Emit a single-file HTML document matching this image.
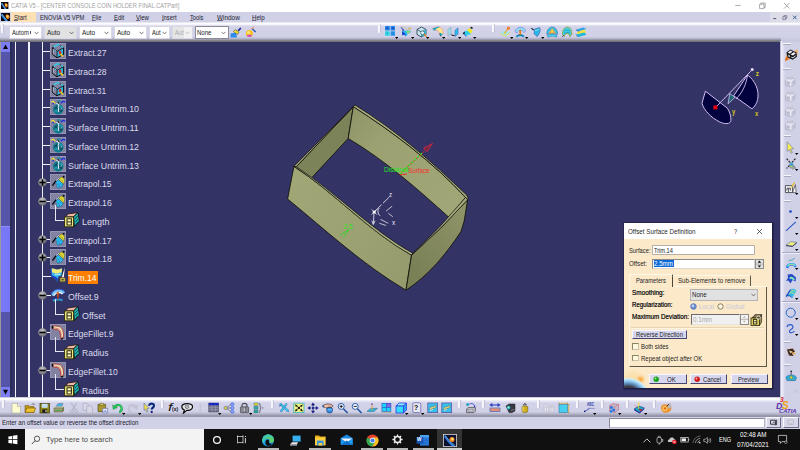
<!DOCTYPE html>
<html lang="en"><head><meta charset="utf-8"><title>CATIA V5 - [CENTER CONSOLE COIN HOLDER FINAL.CATPart]</title>
<style>
html,body{margin:0;padding:0;}
body{width:800px;height:450px;overflow:hidden;position:relative;background:#333366;font-family:"Liberation Sans",sans-serif;}
.r{position:absolute;display:block;box-sizing:border-box;}
.t{position:absolute;display:block;white-space:nowrap;transform-origin:0 0;}
u{text-decoration:underline;text-decoration-thickness:0.4px;text-underline-offset:0.3px;text-decoration-color:#6a6a80;}
</style></head><body>
<div class="r" style="left:0.00px;top:42.00px;width:800.00px;height:355.00px;background:#333366;"></div>
<div class="r" style="left:0.00px;top:0.00px;width:800.00px;height:12.00px;background:#ffffff;"></div>
<svg class="r" style="left:1.20px;top:2.20px;" width="7.4" height="7.2" viewBox="0 0 9 9" preserveAspectRatio="none"><rect width="9" height="9" fill="#06060e"/><path d="M.6 .6C2.6 3.4 4 6.4 6.8 9H4.4C2.8 6.8 1.6 4.6 0 2.6z" fill="#2f86ea"/><path d="M1 1.2C2.8 3.6 4.2 6.2 6 8.6" stroke="#9adcff" stroke-width=".7" fill="none"/><path d="M4.4 2.2C5.6 1.2 7.8 1.8 8.2 3.6C8.6 5.4 7.4 7 5.8 6.6C5 5.4 4.4 3.8 4.4 2.2z" fill="#f07818"/><circle cx="6.2" cy="3.8" r="1.3" fill="#ffd050"/></svg>
<span class="t" style="left:11.20px;top:2.48px;font-size:7.2px;line-height:7.2px;color:#a2a2a2;transform:scaleX(0.7961);">CATIA V5 - [CENTER CONSOLE COIN HOLDER FINAL.CATPart]</span>
<svg class="r" style="left:730.00px;top:0.00px;" width="70" height="12" viewBox="0 0 70 12" preserveAspectRatio="none"><path d="M5.3 5.5H10.6" stroke="#777" stroke-width=".6" fill="none"/><path d="M29.6 4.2H34v4.4H29.6zM30.8 4.2V3H35.2V7.4H34" stroke="#777" stroke-width=".6" fill="none"/><path d="M54 3L59.5 8.5M59.5 3L54 8.5" stroke="#777" stroke-width=".6" fill="none"/></svg>
<div class="r" style="left:0.00px;top:11.80px;width:800.00px;height:10.00px;background:#d0d0e6;"></div>
<svg class="r" style="left:0.60px;top:13.10px;" width="9.4" height="8.3" viewBox="0 0 9 9" preserveAspectRatio="none"><rect width="9" height="9" fill="#06060e"/><path d="M.6 .6C2.6 3.4 4 6.4 6.8 9H4.4C2.8 6.8 1.6 4.6 0 2.6z" fill="#2f86ea"/><path d="M1 1.2C2.8 3.6 4.2 6.2 6 8.6" stroke="#9adcff" stroke-width=".7" fill="none"/><path d="M4.4 2.2C5.6 1.2 7.8 1.8 8.2 3.6C8.6 5.4 7.4 7 5.8 6.6C5 5.4 4.4 3.8 4.4 2.2z" fill="#f07818"/><circle cx="6.2" cy="3.8" r="1.3" fill="#ffd050"/></svg>
<div class="r" style="left:11.00px;top:12.00px;width:25.00px;height:9.80px;background:#fde0b4;"></div>
<span class="t" style="left:14.20px;top:13.78px;font-size:7.2px;line-height:7.2px;color:#1c1c30;transform:scaleX(0.8286);"><u>S</u>tart</span>
<span class="t" style="left:39.80px;top:13.78px;font-size:7.2px;line-height:7.2px;color:#1c1c30;transform:scaleX(0.8058);">ENOVIA V5 VPM</span>
<span class="t" style="left:91.60px;top:13.78px;font-size:7.2px;line-height:7.2px;color:#1c1c30;transform:scaleX(0.8102);"><u>F</u>ile</span>
<span class="t" style="left:113.60px;top:13.78px;font-size:7.2px;line-height:7.2px;color:#1c1c30;transform:scaleX(0.8221);"><u>E</u>dit</span>
<span class="t" style="left:136.40px;top:13.78px;font-size:7.2px;line-height:7.2px;color:#1c1c30;transform:scaleX(0.8400);"><u>V</u>iew</span>
<span class="t" style="left:162.20px;top:13.78px;font-size:7.2px;line-height:7.2px;color:#1c1c30;transform:scaleX(0.8108);"><u>I</u>nsert</span>
<span class="t" style="left:190.00px;top:13.78px;font-size:7.2px;line-height:7.2px;color:#1c1c30;transform:scaleX(0.7972);"><u>T</u>ools</span>
<span class="t" style="left:216.60px;top:13.78px;font-size:7.2px;line-height:7.2px;color:#1c1c30;transform:scaleX(0.8903);"><u>W</u>indow</span>
<span class="t" style="left:252.20px;top:13.78px;font-size:7.2px;line-height:7.2px;color:#1c1c30;transform:scaleX(0.8509);"><u>H</u>elp</span>
<div class="r" style="left:770.00px;top:12.30px;width:30.00px;height:9.50px;background:#dcdde8;"></div>
<svg class="r" style="left:770.00px;top:12.00px;" width="30" height="10" viewBox="0 0 30 10" preserveAspectRatio="none"><path d="M3.2 6.6H6.2" stroke="#446" stroke-width=".9" fill="none"/><path d="M12.8 4.8H15.6V7.6H12.8zM13.9 4.8V3.6H16.8V6.4H15.6" stroke="#557" stroke-width=".6" fill="none"/><path d="M23 3.6L26.6 7.2M26.6 3.6L23 7.2" stroke="#2a5a8c" stroke-width=".9" fill="none"/></svg>
<div class="r" style="left:0.00px;top:21.60px;width:800.00px;height:20.60px;background:linear-gradient(to bottom,#d0d0e6 0%,#ffffff 5%,#fbfbfe 11%,#e0e0f0 17%,#d2d2e8 24%,#d0d0e6 74%,#b2b2c8 84%,#8a8a96 91%,#767676 96%,#6c6c78 99%,#50507a 100%);"></div>
<div class="r" style="left:1.20px;top:24.00px;width:1.70px;height:9.00px;background:#f6f6fd;box-shadow:0.6px 0 0 #b4b4cc;border-radius:.6px;"></div>
<div class="r" style="left:9.10px;top:26.10px;width:33.30px;height:12.80px;background:#fff;border:0.6px solid #d8d8e4;border-radius:.8px;"></div>
<span class="t" style="left:12.10px;top:28.78px;font-size:7.2px;line-height:7.2px;color:#222;transform:scaleX(0.8073);">Autom</span>
<div class="r" style="left:29.70px;top:31.40px;width:0.70px;height:3.00px;background:#555;"></div>
<svg class="r" style="left:34.20px;top:30.50px;" width="5" height="4" viewBox="0 0 5 4" preserveAspectRatio="none"><path d="M.5 .8L2.5 2.9L4.5 .8" stroke="#444" stroke-width=".7" fill="none"/></svg>
<div class="r" style="left:44.10px;top:26.10px;width:32.80px;height:12.80px;background:#e2e2e2;border:0.6px solid #d8d8e4;border-radius:.8px;"></div>
<span class="t" style="left:47.10px;top:28.78px;font-size:7.2px;line-height:7.2px;color:#222;transform:scaleX(0.8912);">Auto</span>
<svg class="r" style="left:68.70px;top:30.50px;" width="5" height="4" viewBox="0 0 5 4" preserveAspectRatio="none"><path d="M.5 .8L2.5 2.9L4.5 .8" stroke="#444" stroke-width=".7" fill="none"/></svg>
<div class="r" style="left:78.60px;top:26.10px;width:33.80px;height:12.80px;background:#fff;border:0.6px solid #d8d8e4;border-radius:.8px;"></div>
<span class="t" style="left:81.60px;top:28.78px;font-size:7.2px;line-height:7.2px;color:#222;transform:scaleX(0.8912);">Auto</span>
<svg class="r" style="left:104.20px;top:30.50px;" width="5" height="4" viewBox="0 0 5 4" preserveAspectRatio="none"><path d="M.5 .8L2.5 2.9L4.5 .8" stroke="#444" stroke-width=".7" fill="none"/></svg>
<div class="r" style="left:113.60px;top:26.10px;width:33.30px;height:12.80px;background:#fff;border:0.6px solid #d8d8e4;border-radius:.8px;"></div>
<span class="t" style="left:116.60px;top:28.78px;font-size:7.2px;line-height:7.2px;color:#222;transform:scaleX(0.8912);">Auto</span>
<svg class="r" style="left:138.70px;top:30.50px;" width="5" height="4" viewBox="0 0 5 4" preserveAspectRatio="none"><path d="M.5 .8L2.5 2.9L4.5 .8" stroke="#444" stroke-width=".7" fill="none"/></svg>
<div class="r" style="left:148.60px;top:26.10px;width:21.80px;height:12.80px;background:#fff;border:0.6px solid #d8d8e4;border-radius:.8px;"></div>
<span class="t" style="left:151.60px;top:28.78px;font-size:7.2px;line-height:7.2px;color:#222;transform:scaleX(0.7958);">Aut</span>
<svg class="r" style="left:162.20px;top:30.50px;" width="5" height="4" viewBox="0 0 5 4" preserveAspectRatio="none"><path d="M.5 .8L2.5 2.9L4.5 .8" stroke="#444" stroke-width=".7" fill="none"/></svg>
<div class="r" style="left:171.60px;top:26.10px;width:21.80px;height:12.80px;background:#f2f2f2;border:0.6px solid #d8d8e4;border-radius:.8px;"></div>
<div class="r" style="left:172.60px;top:27.00px;width:11.50px;height:11.00px;background:#e6e6e6;"></div>
<span class="t" style="left:174.60px;top:28.78px;font-size:7.2px;line-height:7.2px;color:#a8a8b0;transform:scaleX(0.7958);">Aut</span>
<svg class="r" style="left:185.20px;top:30.50px;" width="5" height="4" viewBox="0 0 5 4" preserveAspectRatio="none"><path d="M.5 .8L2.5 2.9L4.5 .8" stroke="#b0b0b8" stroke-width=".7" fill="none"/></svg>
<div class="r" style="left:194.60px;top:26.10px;width:34.30px;height:12.80px;background:#fff;border:0.6px solid #8a8a98;border-radius:.8px;"></div>
<span class="t" style="left:197.20px;top:28.78px;font-size:7.2px;line-height:7.2px;color:#222;transform:scaleX(0.8366);">None</span>
<svg class="r" style="left:220.70px;top:30.50px;" width="5" height="4" viewBox="0 0 5 4" preserveAspectRatio="none"><path d="M.5 .8L2.5 2.9L4.5 .8" stroke="#444" stroke-width=".7" fill="none"/></svg>
<svg class="r" style="left:229.50px;top:26.50px;" width="12" height="11" viewBox="0 0 12 11" preserveAspectRatio="none"><path d="M0.5 6.5L6 5.5L7 10.5H0.5z" fill="#2f8cf0"/><path d="M3.5 4.5L7.5 7.5L9 5L5.4 2.6z" fill="#f0e030" stroke="#333" stroke-width=".5"/><path d="M8.3 3.8L10.8 1" stroke="#1a1a90" stroke-width="1.6"/></svg>
<svg class="r" style="left:244.50px;top:26.00px;" width="12" height="12" viewBox="0 0 12 12" preserveAspectRatio="none"><circle cx="4.4" cy="7.4" r="3.5" fill="#f8c020"/><circle cx="3.6" cy="6.4" r="1.5" fill="#ffe680"/><path d="M1.5 9.5A3.5 3.5 0 0 0 7.4 9.3L4.4 8.6z" fill="#d050c8"/><path d="M7.2 2.6L10.6 6" stroke="#2050b0" stroke-width="1.3"/><path d="M6.2 3.2L9 .8" stroke="#f09060" stroke-width="1.1"/></svg>
<div class="r" style="left:378.20px;top:24.00px;width:1.70px;height:8.80px;background:#f6f6fd;box-shadow:0.6px 0 0 #b4b4cc;border-radius:.6px;"></div>
<svg class="r" style="left:384.60px;top:26.30px;" width="10.6" height="10" viewBox="0 0 10.6 10" preserveAspectRatio="none"><rect x="0" y="0" width="4.8" height="4.5" rx=".5" fill="#2484ea"/><rect x="5.6" y="0" width="4.8" height="4.5" rx=".5" fill="#2484ea"/><rect x="0" y="5.3" width="4.8" height="4.5" rx=".5" fill="#34d8e8"/><rect x="5.6" y="5.3" width="4.8" height="4.5" rx=".5" fill="#2c98ee"/><path d="M1.2 1.4H3.4V3H1.2zM6.8 1.4H9V3H6.8z" fill="#1848b8"/><path d="M1.6 6.6H3V8.6H1.6z" fill="#20a8c8"/><path d="M6.8 6.8H9V8.4H6.8z" fill="#1c60c8"/><path d="M7.4 7.2H8.4V8H7.4z" fill="#40e0f0"/></svg>
<svg class="r" style="left:395.00px;top:37.40px;" width="3.4" height="2" viewBox="0 0 3.4 2" preserveAspectRatio="none"><path d="M0 0H3.4L1.7 1.9z" fill="#000"/></svg>
<svg class="r" style="left:399.60px;top:26.00px;" width="12" height="11.5" viewBox="0 0 12 11.5" preserveAspectRatio="none"><path d="M2 5.2C4 4 5.6 5.4 7.6 4.2L11.2 5.4C10 7.4 8.4 7.2 7.4 8.6L6 10.6L4.2 8.6L2.4 9.6z" fill="#28b4f0"/><path d="M2 5.2L2.4 9.6L4.2 8.6L6 10.6L5 7.4z" fill="#1838d0"/><path d="M6.4 5C8 5.4 9.2 4.8 10.6 5.4L9 6.8C8 6.4 7 6.6 6 6.2z" fill="#78e060"/><path d="M7 7C8 6.8 8.8 7 9.4 6.6" stroke="#f0e050" stroke-width=".8" fill="none"/><path d="M1.4 .8L7.8 2.8L10.6 2.4L8 4L3.6 2.6z" fill="#fbf8ec" stroke="#8c8470" stroke-width=".35"/><circle cx="9.9" cy="2.6" r="1.3" fill="#c8b060"/><circle cx="10.1" cy="2.5" r=".55" fill="#f0e8c0"/><path d="M1 1.4L3.6 4.4" stroke="#2030b0" stroke-width=".9"/><path d="M2 4.6L3.9 4.8L3.4 3z" fill="#2030b0"/></svg>
<svg class="r" style="left:410.60px;top:37.40px;" width="3.4" height="2" viewBox="0 0 3.4 2" preserveAspectRatio="none"><path d="M0 0H3.4L1.7 1.9z" fill="#000"/></svg>
<svg class="r" style="left:415.60px;top:26.00px;" width="12.5" height="12" viewBox="0 0 12.5 12" preserveAspectRatio="none"><path d="M1 3.5L5.5 1L10 3.5V8.5L5.5 11L1 8.5z" fill="#c8e8f0" stroke="#203040" stroke-width=".8"/><path d="M1 3.5L5.5 6L10 3.5M5.5 6V11" stroke="#203040" stroke-width=".7" fill="none"/><path d="M5.5 6L10 3.5V8.5L5.5 11z" fill="#38c0d8"/><circle cx="6.6" cy="6.8" r="1.9" fill="#e8f8ff" stroke="#204060" stroke-width=".6"/><path d="M8 8.2L10.8 10.8" stroke="#f08020" stroke-width="1.2"/></svg>
<svg class="r" style="left:426.20px;top:37.40px;" width="3.4" height="2" viewBox="0 0 3.4 2" preserveAspectRatio="none"><path d="M0 0H3.4L1.7 1.9z" fill="#000"/></svg>
<svg class="r" style="left:431.50px;top:26.00px;" width="12.5" height="12" viewBox="0 0 12.5 12" preserveAspectRatio="none"><path d="M.6 2.4L6.4 .6C9.6 1.8 11.6 4.6 11.2 7.2L8.8 10.4L7.4 7.6C7.4 5.8 6.4 4.6 4.6 4.2L1.6 4.2z" fill="#fce88c" stroke="#f08888" stroke-width=".6"/><path d="M.6 2.4L6.4 .6L7.6 1.2L4.4 2.6L3.4 4.2H1.6z" fill="#18a8c4"/><path d="M11.2 7.2L8.8 10.4L7.4 7.6L8.6 6.8L9.8 8z" fill="#18a8c4"/><path d="M7.4 7.6L8.8 10.4" stroke="#104060" stroke-width=".6"/></svg>
<svg class="r" style="left:442.00px;top:37.40px;" width="3.4" height="2" viewBox="0 0 3.4 2" preserveAspectRatio="none"><path d="M0 0H3.4L1.7 1.9z" fill="#000"/></svg>
<svg class="r" style="left:446.60px;top:26.00px;" width="12.5" height="12" viewBox="0 0 12.5 12" preserveAspectRatio="none"><path d="M1 3.2L4 1.2V8L1 10.2z" fill="#a4e0ee" stroke="#7890a0" stroke-width=".45"/><path d="M8 4.4L11 1.8V8L8 10.6z" fill="#2cc0f0" stroke="#2858a8" stroke-width=".5"/><path d="M4.6 8.4C5 9.8 6.4 9.8 7.4 9.2" stroke="#202030" stroke-width="1.1" fill="none"/></svg>
<svg class="r" style="left:457.60px;top:37.40px;" width="3.4" height="2" viewBox="0 0 3.4 2" preserveAspectRatio="none"><path d="M0 0H3.4L1.7 1.9z" fill="#000"/></svg>
<svg class="r" style="left:462.40px;top:26.00px;" width="12.5" height="12" viewBox="0 0 12.5 12" preserveAspectRatio="none"><path d="M1.4 7C3 4.6 5 4.2 7 4.8L9 8.6C7 8.2 5.4 8.8 4.2 10.6z" fill="#30d0ec"/><path d="M5 4.4L8 2L10.6 5.4L8.2 7.6C7.6 6.2 6.6 5.2 5 4.4z" fill="#f0e820"/><path d="M8 2L9.2 .8L10.8 1.6L10.2 3z" fill="#14141c"/><path d="M.6 7.6L2.4 5.6L3 6.6L1.8 8.6z" fill="#14141c"/><path d="M1.4 7L4.2 10.6" stroke="#1838a8" stroke-width=".7"/></svg>
<svg class="r" style="left:473.40px;top:37.40px;" width="3.4" height="2" viewBox="0 0 3.4 2" preserveAspectRatio="none"><path d="M0 0H3.4L1.7 1.9z" fill="#000"/></svg>
<div class="r" style="left:492.40px;top:24.00px;width:1.90px;height:8.40px;background:#f6f6fd;box-shadow:0.6px 0 0 #b4b4cc;border-radius:.6px;"></div>
<svg class="r" style="left:498.60px;top:26.00px;" width="12.5" height="12" viewBox="0 0 12.5 12" preserveAspectRatio="none"><path d="M1 7.6L5.4 4.4L11 6.4L6.6 10.2z" fill="#9ce8f0"/><path d="M1 7.6L6.6 10.2L11 6.4" stroke="#e8d850" stroke-width=".9" fill="none"/><path d="M4.6 6.8L6.4 6L7.2 7.4L5.4 8.2z" fill="#f0d030"/><path d="M6 6.8L9 2.6" stroke="#f0a030" stroke-width="1.1"/><rect x="8" y=".8" width="2.8" height="2.8" fill="#f06c28"/><rect x="8.9" y="1.6" width="1" height="1" fill="#f8d040"/></svg>
<svg class="r" style="left:509.60px;top:37.40px;" width="3.4" height="2" viewBox="0 0 3.4 2" preserveAspectRatio="none"><path d="M0 0H3.4L1.7 1.9z" fill="#000"/></svg>
<svg class="r" style="left:514.40px;top:26.00px;" width="12.5" height="12" viewBox="0 0 12.5 12" preserveAspectRatio="none"><path d="M1 5.6C2.4 .4 9.6 -.2 11.6 4.6L9.8 6.6C8.4 3.4 4.6 3.6 3 7z" fill="#8ce0f0" stroke="#8078f0" stroke-width=".7"/><path d="M1.6 10.4C3.4 7.6 8.8 7.6 10.6 10.2L9 11.4C7.8 9.8 4.6 9.8 3.2 11.6z" fill="#18a0c0"/><path d="M3 10C4.6 8.6 7.6 8.6 9.2 9.8" stroke="#2840c8" stroke-width=".7" fill="none"/><path d="M6.2 3.8V9" stroke="#f07c18" stroke-width="1.7"/><path d="M5.4 8.6H7V9.8H5.4z" fill="#30a050"/></svg>
<svg class="r" style="left:525.20px;top:37.40px;" width="3.4" height="2" viewBox="0 0 3.4 2" preserveAspectRatio="none"><path d="M0 0H3.4L1.7 1.9z" fill="#000"/></svg>
<svg class="r" style="left:530.20px;top:26.00px;" width="12.5" height="12" viewBox="0 0 12.5 12" preserveAspectRatio="none"><path d="M3.4 3.6L9.6 1.6C10.8 4 10 7 7.2 10.6L3.8 7.6C5 6 4.6 5 3.4 3.6z" fill="#28b8e8" stroke="#2040a0" stroke-width=".5"/><path d="M1.4 2.2L3.6 4.2" stroke="#202040" stroke-width="1.1"/><path d="M5 4.6C6.6 4.4 8 3.8 9.4 3" stroke="#a0f0f0" stroke-width=".8" fill="none"/></svg>
<svg class="r" style="left:541.00px;top:37.40px;" width="3.4" height="2" viewBox="0 0 3.4 2" preserveAspectRatio="none"><path d="M0 0H3.4L1.7 1.9z" fill="#000"/></svg>
<svg class="r" style="left:545.80px;top:26.00px;" width="12.5" height="12" viewBox="0 0 12.5 12" preserveAspectRatio="none"><path d="M.8 8.4C.8 4 3.2 1 6.2 1C9.2 1 11.6 4 11.6 8.4L10.2 8C8 7 4.4 7 2.2 8z" fill="#3cc4e4" stroke="#2c6cb0" stroke-width=".6"/><path d="M3 7.4L6.2 2.6L9.4 7.4C7.6 6.6 4.8 6.6 3 7.4z" fill="#f8d848" stroke="#f08830" stroke-width=".7"/><path d="M1.4 9.4C3.6 8 8.8 8 11 9.4L10.4 11.2C8.4 10 4 10 2 11.2z" fill="#38dcec" stroke="#2c6cb0" stroke-width=".5"/></svg>
<svg class="r" style="left:561.20px;top:26.00px;" width="12.5" height="12" viewBox="0 0 12.5 12" preserveAspectRatio="none"><path d="M1.6 8.8C1 3.6 3.8 1.2 6.4 1.2C9.2 1.2 11 4 10.6 8.6L8.8 10.6C8.8 8.4 7.6 7.4 6 7.4C4.4 7.4 3.6 8.6 3.4 10.4z" fill="#40d4e8" stroke="#8c9828" stroke-width=".8"/><path d="M3.2 5.4C4.6 3.6 7.6 3.6 9 5.4" stroke="#1c98c0" stroke-width=".9" fill="none"/><path d="M3 7.6C4.4 5.8 7.8 5.8 9.2 7.6" stroke="#1c98c0" stroke-width=".8" fill="none"/><path d="M1 11.2L3 9" stroke="#303040" stroke-width=".7"/></svg>
<svg class="r" style="left:575.00px;top:26.00px;" width="12.5" height="12" viewBox="0 0 12.5 12" preserveAspectRatio="none"><path d="M1 3.8L8.6 1.4L11.4 3L3.6 5.6z" fill="#28a0e8"/><path d="M1.6 6L9.6 3.6L11 6.4L3 8.8z" fill="#f0e040"/><path d="M1 8.6L9.4 6.6L11.4 8.8L3.4 11z" fill="#20b8d8"/><path d="M1 3.8L3.6 5.6M1 8.6L3.4 11" stroke="#1840a0" stroke-width=".6"/></svg>
<div class="r" style="left:0.00px;top:42.00px;width:1.20px;height:355.00px;background:#9a9a9a;"></div>
<div class="r" style="left:1.20px;top:42.00px;width:9.00px;height:355.00px;background:#5555aa;"></div>
<div class="r" style="left:1.20px;top:42.00px;width:9.00px;height:9.50px;background:#7c7cf4;"></div>
<svg class="r" style="left:1.20px;top:42.00px;" width="9" height="9.5" viewBox="0 0 9 9.5" preserveAspectRatio="none"><path d="M2 7L4.5 2.4L7 7z" fill="#000"/></svg>
<div class="r" style="left:1.20px;top:226.00px;width:9.00px;height:85.50px;background:#7878f6;border-top:0.8px solid #8c8cff;"></div>
<div class="r" style="left:1.20px;top:387.00px;width:9.00px;height:9.60px;background:#7c7cf4;"></div>
<svg class="r" style="left:1.20px;top:387.00px;" width="9" height="9.6" viewBox="0 0 9 9.6" preserveAspectRatio="none"><path d="M2 2.8L4.5 7.4L7 2.8z" fill="#000"/></svg>
<div class="r" style="left:10.20px;top:42.00px;width:1.60px;height:355.00px;background:#2c2c5c;"></div>
<svg width="0" height="0" style="position:absolute"><defs><pattern id="dth" width="2" height="2" patternUnits="userSpaceOnUse"><rect width="1" height="1" fill="#8a8aa8"/><rect x="1" y="1" width="1" height="1" fill="#8a8aa8"/></pattern><radialGradient id="ndg" cx=".45" cy=".3" r=".75"><stop offset="0" stop-color="#c4c4c8"/><stop offset=".55" stop-color="#909096"/><stop offset="1" stop-color="#5c5c68"/></radialGradient></defs></svg>
<div class="r" style="left:14.90px;top:42.00px;width:1.25px;height:355.00px;background:#f2f2fa;"></div>
<div class="r" style="left:28.40px;top:42.00px;width:1.25px;height:355.00px;background:#f2f2fa;"></div>
<div class="r" style="left:41.60px;top:42.00px;width:1.25px;height:355.00px;background:#f2f2fa;"></div>
<div class="r" style="left:42.00px;top:50.95px;width:8.60px;height:1.20px;background:#f2f2fa;"></div>
<svg class="r" style="left:50.40px;top:43.15px;" width="16" height="16" viewBox="0 0 16 16" preserveAspectRatio="none"><rect width="16" height="16" fill="#7a7a9a"/><rect width="16" height="16" fill="url(#dth)"/><rect x=".5" y=".5" width="15" height="15" fill="none" stroke="#a6a6c0" stroke-width="1" stroke-dasharray="1 1"/><path d="M7.2 8.2L13.6 4.8V11.4L6.9 14.8z" fill="#2cb8dc"/><path d="M2.4 4.8L7.8 1.6L13.6 4.8V11.4L6.9 14.8L2.4 11.4z" fill="none" stroke="#0a0a14" stroke-width="1"/><path d="M2.4 4.8L7.2 8.2L13.6 4.8M7.2 8.2L6.9 14.8" fill="none" stroke="#0a0a14" stroke-width=".8"/><path d="M3.6 4L7.8 1.6L9.6 2.6" stroke="#44cce8" stroke-width="1.5" fill="none"/><path d="M10.8 3.2L13.2 4.6" stroke="#44cce8" stroke-width="1.3" fill="none"/><path d="M3.2 6V10.8" stroke="#d0d0e0" stroke-width=".7"/><path d="M4.4 6.8L6.2 8" stroke="#44cce8" stroke-width="1"/><path d="M8.8 8.2L11 7.8L11.4 10.8L9.2 11.2z" fill="#e02020"/><path d="M10.6 10.8L13 13.6" stroke="#ecd420" stroke-width="1.6"/><path d="M9.6 11.2L10.8 12.6" stroke="#f09820" stroke-width=".8"/></svg>
<span class="t" style="left:68.00px;top:48.11px;font-size:9.4px;line-height:9.4px;color:#dcdcec;transform:scaleX(0.9121);">Extract.27</span>
<div class="r" style="left:42.00px;top:69.95px;width:8.60px;height:1.20px;background:#f2f2fa;"></div>
<svg class="r" style="left:50.40px;top:61.90px;" width="16" height="16" viewBox="0 0 16 16" preserveAspectRatio="none"><rect width="16" height="16" fill="#7a7a9a"/><rect width="16" height="16" fill="url(#dth)"/><rect x=".5" y=".5" width="15" height="15" fill="none" stroke="#a6a6c0" stroke-width="1" stroke-dasharray="1 1"/><path d="M7.2 8.2L13.6 4.8V11.4L6.9 14.8z" fill="#2cb8dc"/><path d="M2.4 4.8L7.8 1.6L13.6 4.8V11.4L6.9 14.8L2.4 11.4z" fill="none" stroke="#0a0a14" stroke-width="1"/><path d="M2.4 4.8L7.2 8.2L13.6 4.8M7.2 8.2L6.9 14.8" fill="none" stroke="#0a0a14" stroke-width=".8"/><path d="M3.6 4L7.8 1.6L9.6 2.6" stroke="#44cce8" stroke-width="1.5" fill="none"/><path d="M10.8 3.2L13.2 4.6" stroke="#44cce8" stroke-width="1.3" fill="none"/><path d="M3.2 6V10.8" stroke="#d0d0e0" stroke-width=".7"/><path d="M4.4 6.8L6.2 8" stroke="#44cce8" stroke-width="1"/><path d="M8.8 8.2L11 7.8L11.4 10.8L9.2 11.2z" fill="#e02020"/><path d="M10.6 10.8L13 13.6" stroke="#ecd420" stroke-width="1.6"/><path d="M9.6 11.2L10.8 12.6" stroke="#f09820" stroke-width=".8"/></svg>
<span class="t" style="left:68.00px;top:66.86px;font-size:9.4px;line-height:9.4px;color:#dcdcec;transform:scaleX(0.9121);">Extract.28</span>
<div class="r" style="left:42.00px;top:88.95px;width:8.60px;height:1.20px;background:#f2f2fa;"></div>
<svg class="r" style="left:50.40px;top:80.65px;" width="16" height="16" viewBox="0 0 16 16" preserveAspectRatio="none"><rect width="16" height="16" fill="#7a7a9a"/><rect width="16" height="16" fill="url(#dth)"/><rect x=".5" y=".5" width="15" height="15" fill="none" stroke="#a6a6c0" stroke-width="1" stroke-dasharray="1 1"/><path d="M7.2 8.2L13.6 4.8V11.4L6.9 14.8z" fill="#2cb8dc"/><path d="M2.4 4.8L7.8 1.6L13.6 4.8V11.4L6.9 14.8L2.4 11.4z" fill="none" stroke="#0a0a14" stroke-width="1"/><path d="M2.4 4.8L7.2 8.2L13.6 4.8M7.2 8.2L6.9 14.8" fill="none" stroke="#0a0a14" stroke-width=".8"/><path d="M3.6 4L7.8 1.6L9.6 2.6" stroke="#44cce8" stroke-width="1.5" fill="none"/><path d="M10.8 3.2L13.2 4.6" stroke="#44cce8" stroke-width="1.3" fill="none"/><path d="M3.2 6V10.8" stroke="#d0d0e0" stroke-width=".7"/><path d="M4.4 6.8L6.2 8" stroke="#44cce8" stroke-width="1"/><path d="M8.8 8.2L11 7.8L11.4 10.8L9.2 11.2z" fill="#e02020"/><path d="M10.6 10.8L13 13.6" stroke="#ecd420" stroke-width="1.6"/><path d="M9.6 11.2L10.8 12.6" stroke="#f09820" stroke-width=".8"/></svg>
<span class="t" style="left:68.00px;top:85.61px;font-size:9.4px;line-height:9.4px;color:#dcdcec;transform:scaleX(0.9027);">Extract.31</span>
<div class="r" style="left:42.00px;top:106.95px;width:8.60px;height:1.20px;background:#f2f2fa;"></div>
<svg class="r" style="left:50.40px;top:99.40px;" width="16" height="16" viewBox="0 0 16 16" preserveAspectRatio="none"><rect width="16" height="16" fill="#7a7a9a"/><rect width="16" height="16" fill="url(#dth)"/><rect x=".5" y=".5" width="15" height="15" fill="none" stroke="#a6a6c0" stroke-width="1" stroke-dasharray="1 1"/><circle cx="8.2" cy="10.2" r="5.3" fill="#147c90"/><path d="M4.4 9C5.6 7.4 7 7 8 7.2L8.2 10.4C7 9.6 5.6 9.6 4.4 10.4z" fill="#0c4c60"/><path d="M9 10.6C10.4 10 11.6 10.2 12.6 11L11.6 13.4C10.6 12.6 9.8 12.6 8.8 13z" fill="#0c4c60"/><path d="M4.6 12.6C5.6 11.6 6.8 11.6 7.6 12.2" stroke="#38b4c8" stroke-width=".9" fill="none"/><path d="M9.6 8C10.8 7.6 12 8 12.8 9" stroke="#38b4c8" stroke-width=".9" fill="none"/><path d="M1.2 3.2L3 2.2L5.4 4.4" stroke="#f0e030" stroke-width="1.2" fill="none"/><path d="M2.6 4.4L4 5" stroke="#2028e0" stroke-width="1.2" fill="none"/><path d="M10.8 4.2L13 2.4L15.4 3.2" stroke="#2430e0" stroke-width="1.4" fill="none"/><path d="M7 2.4L9.4 1.6L10.6 3" stroke="#18889c" stroke-width="1.2" fill="none"/><path d="M8 2.8L9 5.4" stroke="#101828" stroke-width="1"/><path d="M6.4 4.4L9 5.6L8.2 8.4L8.8 13" stroke="#f4f4ff" stroke-width="1" fill="none"/><path d="M10.6 10.6L12 9.4" stroke="#f0d8e0" stroke-width=".7"/></svg>
<span class="t" style="left:68.00px;top:104.36px;font-size:9.4px;line-height:9.4px;color:#dcdcec;transform:scaleX(0.9399);">Surface Untrim.10</span>
<div class="r" style="left:42.00px;top:125.95px;width:8.60px;height:1.20px;background:#f2f2fa;"></div>
<svg class="r" style="left:50.40px;top:118.15px;" width="16" height="16" viewBox="0 0 16 16" preserveAspectRatio="none"><rect width="16" height="16" fill="#7a7a9a"/><rect width="16" height="16" fill="url(#dth)"/><rect x=".5" y=".5" width="15" height="15" fill="none" stroke="#a6a6c0" stroke-width="1" stroke-dasharray="1 1"/><circle cx="8.2" cy="10.2" r="5.3" fill="#147c90"/><path d="M4.4 9C5.6 7.4 7 7 8 7.2L8.2 10.4C7 9.6 5.6 9.6 4.4 10.4z" fill="#0c4c60"/><path d="M9 10.6C10.4 10 11.6 10.2 12.6 11L11.6 13.4C10.6 12.6 9.8 12.6 8.8 13z" fill="#0c4c60"/><path d="M4.6 12.6C5.6 11.6 6.8 11.6 7.6 12.2" stroke="#38b4c8" stroke-width=".9" fill="none"/><path d="M9.6 8C10.8 7.6 12 8 12.8 9" stroke="#38b4c8" stroke-width=".9" fill="none"/><path d="M1.2 3.2L3 2.2L5.4 4.4" stroke="#f0e030" stroke-width="1.2" fill="none"/><path d="M2.6 4.4L4 5" stroke="#2028e0" stroke-width="1.2" fill="none"/><path d="M10.8 4.2L13 2.4L15.4 3.2" stroke="#2430e0" stroke-width="1.4" fill="none"/><path d="M7 2.4L9.4 1.6L10.6 3" stroke="#18889c" stroke-width="1.2" fill="none"/><path d="M8 2.8L9 5.4" stroke="#101828" stroke-width="1"/><path d="M6.4 4.4L9 5.6L8.2 8.4L8.8 13" stroke="#f4f4ff" stroke-width="1" fill="none"/><path d="M10.6 10.6L12 9.4" stroke="#f0d8e0" stroke-width=".7"/></svg>
<span class="t" style="left:68.00px;top:123.11px;font-size:9.4px;line-height:9.4px;color:#dcdcec;transform:scaleX(0.9433);">Surface Untrim.11</span>
<div class="r" style="left:42.00px;top:144.95px;width:8.60px;height:1.20px;background:#f2f2fa;"></div>
<svg class="r" style="left:50.40px;top:136.90px;" width="16" height="16" viewBox="0 0 16 16" preserveAspectRatio="none"><rect width="16" height="16" fill="#7a7a9a"/><rect width="16" height="16" fill="url(#dth)"/><rect x=".5" y=".5" width="15" height="15" fill="none" stroke="#a6a6c0" stroke-width="1" stroke-dasharray="1 1"/><circle cx="8.2" cy="10.2" r="5.3" fill="#147c90"/><path d="M4.4 9C5.6 7.4 7 7 8 7.2L8.2 10.4C7 9.6 5.6 9.6 4.4 10.4z" fill="#0c4c60"/><path d="M9 10.6C10.4 10 11.6 10.2 12.6 11L11.6 13.4C10.6 12.6 9.8 12.6 8.8 13z" fill="#0c4c60"/><path d="M4.6 12.6C5.6 11.6 6.8 11.6 7.6 12.2" stroke="#38b4c8" stroke-width=".9" fill="none"/><path d="M9.6 8C10.8 7.6 12 8 12.8 9" stroke="#38b4c8" stroke-width=".9" fill="none"/><path d="M1.2 3.2L3 2.2L5.4 4.4" stroke="#f0e030" stroke-width="1.2" fill="none"/><path d="M2.6 4.4L4 5" stroke="#2028e0" stroke-width="1.2" fill="none"/><path d="M10.8 4.2L13 2.4L15.4 3.2" stroke="#2430e0" stroke-width="1.4" fill="none"/><path d="M7 2.4L9.4 1.6L10.6 3" stroke="#18889c" stroke-width="1.2" fill="none"/><path d="M8 2.8L9 5.4" stroke="#101828" stroke-width="1"/><path d="M6.4 4.4L9 5.6L8.2 8.4L8.8 13" stroke="#f4f4ff" stroke-width="1" fill="none"/><path d="M10.6 10.6L12 9.4" stroke="#f0d8e0" stroke-width=".7"/></svg>
<span class="t" style="left:68.00px;top:141.86px;font-size:9.4px;line-height:9.4px;color:#dcdcec;transform:scaleX(0.9399);">Surface Untrim.12</span>
<div class="r" style="left:42.00px;top:163.95px;width:8.60px;height:1.20px;background:#f2f2fa;"></div>
<svg class="r" style="left:50.40px;top:155.65px;" width="16" height="16" viewBox="0 0 16 16" preserveAspectRatio="none"><rect width="16" height="16" fill="#7a7a9a"/><rect width="16" height="16" fill="url(#dth)"/><rect x=".5" y=".5" width="15" height="15" fill="none" stroke="#a6a6c0" stroke-width="1" stroke-dasharray="1 1"/><circle cx="8.2" cy="10.2" r="5.3" fill="#147c90"/><path d="M4.4 9C5.6 7.4 7 7 8 7.2L8.2 10.4C7 9.6 5.6 9.6 4.4 10.4z" fill="#0c4c60"/><path d="M9 10.6C10.4 10 11.6 10.2 12.6 11L11.6 13.4C10.6 12.6 9.8 12.6 8.8 13z" fill="#0c4c60"/><path d="M4.6 12.6C5.6 11.6 6.8 11.6 7.6 12.2" stroke="#38b4c8" stroke-width=".9" fill="none"/><path d="M9.6 8C10.8 7.6 12 8 12.8 9" stroke="#38b4c8" stroke-width=".9" fill="none"/><path d="M1.2 3.2L3 2.2L5.4 4.4" stroke="#f0e030" stroke-width="1.2" fill="none"/><path d="M2.6 4.4L4 5" stroke="#2028e0" stroke-width="1.2" fill="none"/><path d="M10.8 4.2L13 2.4L15.4 3.2" stroke="#2430e0" stroke-width="1.4" fill="none"/><path d="M7 2.4L9.4 1.6L10.6 3" stroke="#18889c" stroke-width="1.2" fill="none"/><path d="M8 2.8L9 5.4" stroke="#101828" stroke-width="1"/><path d="M6.4 4.4L9 5.6L8.2 8.4L8.8 13" stroke="#f4f4ff" stroke-width="1" fill="none"/><path d="M10.6 10.6L12 9.4" stroke="#f0d8e0" stroke-width=".7"/></svg>
<span class="t" style="left:68.00px;top:160.61px;font-size:9.4px;line-height:9.4px;color:#dcdcec;transform:scaleX(0.9399);">Surface Untrim.13</span>
<div class="r" style="left:42.00px;top:181.95px;width:8.60px;height:1.20px;background:#f2f2fa;"></div>
<svg class="r" style="left:50.40px;top:174.40px;" width="16" height="16" viewBox="0 0 16 16" preserveAspectRatio="none"><rect width="16" height="16" fill="#7a7a9a"/><rect width="16" height="16" fill="url(#dth)"/><rect x=".5" y=".5" width="15" height="15" fill="none" stroke="#a6a6c0" stroke-width="1" stroke-dasharray="1 1"/><path d="M2.4 11.6L6.2 6.6" stroke="#08080c" stroke-width="1.5"/><path d="M6.2 6.6L9 4.4" stroke="#c8cce0" stroke-width=".8"/><path d="M5.4 8.8L8.6 5.6L13.4 10L11 14L9.6 12.4L8.4 14.8L6.6 12.4L7 10.6z" fill="#2cb8ec" stroke="#144070" stroke-width=".4"/><path d="M8 9.4L9.6 12.4M9.6 8.4L11.2 10.6" stroke="#1880c0" stroke-width=".6"/><path d="M8.6 5.6L10.6 3.2C12.6 2.6 14.8 4.6 14.6 7L13.4 10z" fill="#dcd838" stroke="#4c4c18" stroke-width=".4"/><path d="M10.6 5.4L13 7.4" stroke="#8c8c20" stroke-width=".6"/><circle cx="13.6" cy="2.8" r="1" fill="#0c0c14"/></svg>
<svg class="r" style="left:38.00px;top:178.40px;" width="9" height="9" viewBox="0 0 9 9" preserveAspectRatio="none"><circle cx="4.5" cy="4.5" r="4.3" fill="url(#ndg)"/><path d="M1.4 4.5H7.6" stroke="#000" stroke-width="1.6"/><path d="M4.5 1.4V7.6" stroke="#000" stroke-width="1.6"/></svg>
<span class="t" style="left:68.00px;top:179.36px;font-size:9.4px;line-height:9.4px;color:#dcdcec;transform:scaleX(0.9169);">Extrapol.15</span>
<div class="r" style="left:42.00px;top:200.95px;width:8.60px;height:1.20px;background:#f2f2fa;"></div>
<svg class="r" style="left:50.40px;top:193.15px;" width="16" height="16" viewBox="0 0 16 16" preserveAspectRatio="none"><rect width="16" height="16" fill="#7a7a9a"/><rect width="16" height="16" fill="url(#dth)"/><rect x=".5" y=".5" width="15" height="15" fill="none" stroke="#a6a6c0" stroke-width="1" stroke-dasharray="1 1"/><path d="M2.4 11.6L6.2 6.6" stroke="#08080c" stroke-width="1.5"/><path d="M6.2 6.6L9 4.4" stroke="#c8cce0" stroke-width=".8"/><path d="M5.4 8.8L8.6 5.6L13.4 10L11 14L9.6 12.4L8.4 14.8L6.6 12.4L7 10.6z" fill="#2cb8ec" stroke="#144070" stroke-width=".4"/><path d="M8 9.4L9.6 12.4M9.6 8.4L11.2 10.6" stroke="#1880c0" stroke-width=".6"/><path d="M8.6 5.6L10.6 3.2C12.6 2.6 14.8 4.6 14.6 7L13.4 10z" fill="#dcd838" stroke="#4c4c18" stroke-width=".4"/><path d="M10.6 5.4L13 7.4" stroke="#8c8c20" stroke-width=".6"/><circle cx="13.6" cy="2.8" r="1" fill="#0c0c14"/></svg>
<svg class="r" style="left:38.00px;top:197.15px;" width="9" height="9" viewBox="0 0 9 9" preserveAspectRatio="none"><circle cx="4.5" cy="4.5" r="4.3" fill="url(#ndg)"/><path d="M1.4 4.5H7.6" stroke="#000" stroke-width="1.6"/></svg>
<span class="t" style="left:68.00px;top:198.11px;font-size:9.4px;line-height:9.4px;color:#dcdcec;transform:scaleX(0.9211);">Extrapol.16</span>
<div class="r" style="left:55.35px;top:205.40px;width:1.05px;height:15.80px;background:#e6e6f4;"></div>
<div class="r" style="left:55.35px;top:220.15px;width:9.20px;height:1.05px;background:#e6e6f4;"></div>
<svg class="r" style="left:64.00px;top:212.30px;" width="16" height="16" viewBox="0 0 16 16" preserveAspectRatio="none"><path d="M1 5L4.6 1.8L14 .6L9.6 4.8z" fill="#f0b8a0" stroke="#141414" stroke-width=".8"/><path d="M9.6 4.8L14 .6L15.4 9.4L10.4 14.6z" fill="#20b4b4" stroke="#141414" stroke-width=".9"/><path d="M11 7L13.6 4M11.4 10L14 7M11.6 12.6L14.6 9.6" stroke="#0a3c3c" stroke-width=".9"/><rect x=".6" y="5" width="9" height="9.8" fill="#f4ec80" stroke="#2c280c" stroke-width=".9"/><rect x="3" y="6.8" width="4.4" height="6.2" fill="#fcf8b8" stroke="#28240c" stroke-width="1"/><path d="M3 9.9H7.4" stroke="#28240c" stroke-width="1"/></svg>
<span class="t" style="left:81.50px;top:216.86px;font-size:9.4px;line-height:9.4px;color:#dcdcec;transform:scaleX(0.9599);">Length</span>
<div class="r" style="left:42.00px;top:238.95px;width:8.60px;height:1.20px;background:#f2f2fa;"></div>
<svg class="r" style="left:50.40px;top:230.65px;" width="16" height="16" viewBox="0 0 16 16" preserveAspectRatio="none"><rect width="16" height="16" fill="#7a7a9a"/><rect width="16" height="16" fill="url(#dth)"/><rect x=".5" y=".5" width="15" height="15" fill="none" stroke="#a6a6c0" stroke-width="1" stroke-dasharray="1 1"/><path d="M2.4 11.6L6.2 6.6" stroke="#08080c" stroke-width="1.5"/><path d="M6.2 6.6L9 4.4" stroke="#c8cce0" stroke-width=".8"/><path d="M5.4 8.8L8.6 5.6L13.4 10L11 14L9.6 12.4L8.4 14.8L6.6 12.4L7 10.6z" fill="#2cb8ec" stroke="#144070" stroke-width=".4"/><path d="M8 9.4L9.6 12.4M9.6 8.4L11.2 10.6" stroke="#1880c0" stroke-width=".6"/><path d="M8.6 5.6L10.6 3.2C12.6 2.6 14.8 4.6 14.6 7L13.4 10z" fill="#dcd838" stroke="#4c4c18" stroke-width=".4"/><path d="M10.6 5.4L13 7.4" stroke="#8c8c20" stroke-width=".6"/><circle cx="13.6" cy="2.8" r="1" fill="#0c0c14"/></svg>
<svg class="r" style="left:38.00px;top:234.65px;" width="9" height="9" viewBox="0 0 9 9" preserveAspectRatio="none"><circle cx="4.5" cy="4.5" r="4.3" fill="url(#ndg)"/><path d="M1.4 4.5H7.6" stroke="#000" stroke-width="1.6"/><path d="M4.5 1.4V7.6" stroke="#000" stroke-width="1.6"/></svg>
<span class="t" style="left:68.00px;top:235.61px;font-size:9.4px;line-height:9.4px;color:#dcdcec;transform:scaleX(0.9169);">Extrapol.17</span>
<div class="r" style="left:42.00px;top:256.95px;width:8.60px;height:1.20px;background:#f2f2fa;"></div>
<svg class="r" style="left:50.40px;top:249.40px;" width="16" height="16" viewBox="0 0 16 16" preserveAspectRatio="none"><rect width="16" height="16" fill="#7a7a9a"/><rect width="16" height="16" fill="url(#dth)"/><rect x=".5" y=".5" width="15" height="15" fill="none" stroke="#a6a6c0" stroke-width="1" stroke-dasharray="1 1"/><path d="M2.4 11.6L6.2 6.6" stroke="#08080c" stroke-width="1.5"/><path d="M6.2 6.6L9 4.4" stroke="#c8cce0" stroke-width=".8"/><path d="M5.4 8.8L8.6 5.6L13.4 10L11 14L9.6 12.4L8.4 14.8L6.6 12.4L7 10.6z" fill="#2cb8ec" stroke="#144070" stroke-width=".4"/><path d="M8 9.4L9.6 12.4M9.6 8.4L11.2 10.6" stroke="#1880c0" stroke-width=".6"/><path d="M8.6 5.6L10.6 3.2C12.6 2.6 14.8 4.6 14.6 7L13.4 10z" fill="#dcd838" stroke="#4c4c18" stroke-width=".4"/><path d="M10.6 5.4L13 7.4" stroke="#8c8c20" stroke-width=".6"/><circle cx="13.6" cy="2.8" r="1" fill="#0c0c14"/></svg>
<svg class="r" style="left:38.00px;top:253.40px;" width="9" height="9" viewBox="0 0 9 9" preserveAspectRatio="none"><circle cx="4.5" cy="4.5" r="4.3" fill="url(#ndg)"/><path d="M1.4 4.5H7.6" stroke="#000" stroke-width="1.6"/><path d="M4.5 1.4V7.6" stroke="#000" stroke-width="1.6"/></svg>
<span class="t" style="left:68.00px;top:254.36px;font-size:9.4px;line-height:9.4px;color:#dcdcec;transform:scaleX(0.9211);">Extrapol.18</span>
<div class="r" style="left:42.00px;top:275.95px;width:8.60px;height:1.20px;background:#f2f2fa;"></div>
<svg class="r" style="left:50.40px;top:267.15px;" width="16" height="16" viewBox="0 0 16 16" preserveAspectRatio="none"><path d="M1 1.8C3.4 .8 5.6 3.2 8 2.6L12.2 1.4L11.6 9C9.6 8.4 8.6 9.4 8 10.8L7.6 14.8C6 12.4 3.8 10.6 1.6 9.6z" fill="#34b4ec"/><path d="M1.6 9.6C3.8 10.6 6 12.4 7.6 14.8L7.8 11.6C6 10 4.2 9 2.4 8.4z" fill="#1838c8"/><path d="M1.8 1.6C4 .8 6 3 8.4 2.4C9.8 2 10.8 1.4 12 1.4L11.6 5.4C9 5.2 7.6 7 5.4 6.4C4 6 3 5.4 2 5.6z" fill="#f2e878"/><path d="M4.6 7.6C6.6 8.2 8.4 7 10.6 7.4" stroke="#b0f0f4" stroke-width="1.1" fill="none"/><path d="M1 1.8L1.6 9.6" stroke="#1c40d0" stroke-width=".8"/><path d="M14.8 .8L13.8 10.6L11.6 10.4z" fill="#ffffff"/><path d="M11.6 10.4L12.8 3.4" stroke="#2c2c40" stroke-width=".5"/><rect x="10" y="10.8" width="5.2" height="4" rx=".6" fill="#e8d860" stroke="#50481c" stroke-width=".8"/><rect x="11.4" y="12" width="2.4" height="1.5" fill="#46401c"/></svg>
<div class="r" style="left:67.90px;top:270.85px;width:30.00px;height:13.00px;background:#ff8000;"></div>
<span class="t" style="left:68.20px;top:273.11px;font-size:9.4px;line-height:9.4px;color:#ffffff;transform:scaleX(0.9076);">Trim.14</span>
<div class="r" style="left:42.00px;top:294.95px;width:8.60px;height:1.20px;background:#f2f2fa;"></div>
<svg class="r" style="left:50.40px;top:286.90px;" width="16" height="16" viewBox="0 0 16 16" preserveAspectRatio="none"><path d="M1.2 7.8C2.6 1.6 12 .6 15 5.2L12.8 7C10.4 4.2 5.6 4.6 3.4 9.2z" fill="#7cc4f4"/><path d="M1.2 7.8C2.6 1.6 12 .6 15 5.2" stroke="#2858e0" stroke-width=".9" fill="none"/><path d="M3.2 8.4C5.4 4.4 10.8 4 13 6.4L11.8 7.4C9.8 5.6 6.4 5.8 4.4 9z" fill="#ecf8ff"/><path d="M2.4 13C5 10.6 11 10.6 13.2 12.6L11.8 14.6C10.4 13.2 6 13.2 4.2 15z" fill="#2c9cc0"/><path d="M2.4 13C5 10.6 11 10.6 13.2 12.6" stroke="#2438c8" stroke-width=".8" fill="none"/><path d="M7.9 6.4V12" stroke="#b82418" stroke-width="1.3"/><path d="M7.9 5.2V9.6" stroke="#f0b820" stroke-width=".6"/><path d="M6.4 7.2L7.9 4.8L9.4 7.2" stroke="#d84818" stroke-width=".8" fill="none"/></svg>
<svg class="r" style="left:38.00px;top:290.90px;" width="9" height="9" viewBox="0 0 9 9" preserveAspectRatio="none"><circle cx="4.5" cy="4.5" r="4.3" fill="url(#ndg)"/><path d="M1.4 4.5H7.6" stroke="#000" stroke-width="1.6"/></svg>
<span class="t" style="left:68.00px;top:291.86px;font-size:9.4px;line-height:9.4px;color:#dcdcec;transform:scaleX(0.9406);">Offset.9</span>
<div class="r" style="left:55.35px;top:299.15px;width:1.05px;height:15.80px;background:#e6e6f4;"></div>
<div class="r" style="left:55.35px;top:313.90px;width:9.20px;height:1.05px;background:#e6e6f4;"></div>
<svg class="r" style="left:64.00px;top:306.05px;" width="16" height="16" viewBox="0 0 16 16" preserveAspectRatio="none"><path d="M1 5L4.6 1.8L14 .6L9.6 4.8z" fill="#f0b8a0" stroke="#141414" stroke-width=".8"/><path d="M9.6 4.8L14 .6L15.4 9.4L10.4 14.6z" fill="#20b4b4" stroke="#141414" stroke-width=".9"/><path d="M11 7L13.6 4M11.4 10L14 7M11.6 12.6L14.6 9.6" stroke="#0a3c3c" stroke-width=".9"/><rect x=".6" y="5" width="9" height="9.8" fill="#f4ec80" stroke="#2c280c" stroke-width=".9"/><rect x="3" y="6.8" width="4.4" height="6.2" fill="#fcf8b8" stroke="#28240c" stroke-width="1"/><path d="M3 9.9H7.4" stroke="#28240c" stroke-width="1"/></svg>
<span class="t" style="left:81.50px;top:310.61px;font-size:9.4px;line-height:9.4px;color:#dcdcec;transform:scaleX(0.9476);">Offset</span>
<div class="r" style="left:42.00px;top:331.95px;width:8.60px;height:1.20px;background:#f2f2fa;"></div>
<svg class="r" style="left:50.40px;top:324.40px;" width="16" height="16" viewBox="0 0 16 16" preserveAspectRatio="none"><rect width="16" height="16" fill="#7a7a9a"/><rect width="16" height="16" fill="url(#dth)"/><rect x=".5" y=".5" width="15" height="15" fill="none" stroke="#a6a6c0" stroke-width="1" stroke-dasharray="1 1"/><path d="M2.8 1.6L10 2.6C12.8 4.4 14 8.6 13.4 13.4L10.6 14.6C11 10 10 7 8 5.8L3 5z" fill="#dcd4ac" stroke="#b41c2c" stroke-width=".7"/><path d="M5.4 3.6L9.4 4.2C11.4 5.6 12.4 8.6 12 12.6" stroke="#f4ecc0" stroke-width="1" fill="none"/><path d="M4.6 4L8.6 4.8C10.4 6 11.4 8.8 11 13" stroke="#c43444" stroke-width=".5" fill="none"/><path d="M1.6 2.4L2.8 1.6L3.6 3.2L3 5L1.8 4.2z" fill="#0c0c14"/><path d="M10.6 14.6L13.4 13.4L13 15.2L11 15.8z" fill="#0c0c14"/></svg>
<svg class="r" style="left:38.00px;top:328.40px;" width="9" height="9" viewBox="0 0 9 9" preserveAspectRatio="none"><circle cx="4.5" cy="4.5" r="4.3" fill="url(#ndg)"/><path d="M1.4 4.5H7.6" stroke="#000" stroke-width="1.6"/></svg>
<span class="t" style="left:68.00px;top:329.36px;font-size:9.4px;line-height:9.4px;color:#dcdcec;transform:scaleX(0.9186);">EdgeFillet.9</span>
<div class="r" style="left:55.35px;top:336.65px;width:1.05px;height:15.80px;background:#e6e6f4;"></div>
<div class="r" style="left:55.35px;top:351.40px;width:9.20px;height:1.05px;background:#e6e6f4;"></div>
<svg class="r" style="left:64.00px;top:343.55px;" width="16" height="16" viewBox="0 0 16 16" preserveAspectRatio="none"><path d="M1 5L4.6 1.8L14 .6L9.6 4.8z" fill="#f0b8a0" stroke="#141414" stroke-width=".8"/><path d="M9.6 4.8L14 .6L15.4 9.4L10.4 14.6z" fill="#20b4b4" stroke="#141414" stroke-width=".9"/><path d="M11 7L13.6 4M11.4 10L14 7M11.6 12.6L14.6 9.6" stroke="#0a3c3c" stroke-width=".9"/><rect x=".6" y="5" width="9" height="9.8" fill="#f4ec80" stroke="#2c280c" stroke-width=".9"/><rect x="3" y="6.8" width="4.4" height="6.2" fill="#fcf8b8" stroke="#28240c" stroke-width="1"/><path d="M3 9.9H7.4" stroke="#28240c" stroke-width="1"/></svg>
<span class="t" style="left:81.50px;top:348.11px;font-size:9.4px;line-height:9.4px;color:#dcdcec;transform:scaleX(0.9091);">Radius</span>
<div class="r" style="left:42.00px;top:369.95px;width:8.60px;height:1.20px;background:#f2f2fa;"></div>
<svg class="r" style="left:50.40px;top:361.90px;" width="16" height="16" viewBox="0 0 16 16" preserveAspectRatio="none"><rect width="16" height="16" fill="#7a7a9a"/><rect width="16" height="16" fill="url(#dth)"/><rect x=".5" y=".5" width="15" height="15" fill="none" stroke="#a6a6c0" stroke-width="1" stroke-dasharray="1 1"/><path d="M2.8 1.6L10 2.6C12.8 4.4 14 8.6 13.4 13.4L10.6 14.6C11 10 10 7 8 5.8L3 5z" fill="#dcd4ac" stroke="#b41c2c" stroke-width=".7"/><path d="M5.4 3.6L9.4 4.2C11.4 5.6 12.4 8.6 12 12.6" stroke="#f4ecc0" stroke-width="1" fill="none"/><path d="M4.6 4L8.6 4.8C10.4 6 11.4 8.8 11 13" stroke="#c43444" stroke-width=".5" fill="none"/><path d="M1.6 2.4L2.8 1.6L3.6 3.2L3 5L1.8 4.2z" fill="#0c0c14"/><path d="M10.6 14.6L13.4 13.4L13 15.2L11 15.8z" fill="#0c0c14"/></svg>
<svg class="r" style="left:38.00px;top:365.90px;" width="9" height="9" viewBox="0 0 9 9" preserveAspectRatio="none"><circle cx="4.5" cy="4.5" r="4.3" fill="url(#ndg)"/><path d="M1.4 4.5H7.6" stroke="#000" stroke-width="1.6"/></svg>
<span class="t" style="left:68.00px;top:366.86px;font-size:9.4px;line-height:9.4px;color:#dcdcec;transform:scaleX(0.9113);">EdgeFillet.10</span>
<div class="r" style="left:55.35px;top:374.15px;width:1.05px;height:15.80px;background:#e6e6f4;"></div>
<div class="r" style="left:55.35px;top:388.90px;width:9.20px;height:1.05px;background:#e6e6f4;"></div>
<svg class="r" style="left:64.00px;top:381.05px;" width="16" height="16" viewBox="0 0 16 16" preserveAspectRatio="none"><path d="M1 5L4.6 1.8L14 .6L9.6 4.8z" fill="#f0b8a0" stroke="#141414" stroke-width=".8"/><path d="M9.6 4.8L14 .6L15.4 9.4L10.4 14.6z" fill="#20b4b4" stroke="#141414" stroke-width=".9"/><path d="M11 7L13.6 4M11.4 10L14 7M11.6 12.6L14.6 9.6" stroke="#0a3c3c" stroke-width=".9"/><rect x=".6" y="5" width="9" height="9.8" fill="#f4ec80" stroke="#2c280c" stroke-width=".9"/><rect x="3" y="6.8" width="4.4" height="6.2" fill="#fcf8b8" stroke="#28240c" stroke-width="1"/><path d="M3 9.9H7.4" stroke="#28240c" stroke-width="1"/></svg>
<span class="t" style="left:81.50px;top:385.61px;font-size:9.4px;line-height:9.4px;color:#dcdcec;transform:scaleX(0.9091);">Radius</span>
<svg class="r" style="left:280.00px;top:95.00px;" width="200" height="205" viewBox="280 95 200 205" preserveAspectRatio="none"><defs><linearGradient id="gne" x1="353" y1="110" x2="450" y2="210" gradientUnits="userSpaceOnUse"><stop offset="0" stop-color="#8f9568"/><stop offset=".3" stop-color="#9ba171"/><stop offset="1" stop-color="#a0a676"/></linearGradient><linearGradient id="gsw" x1="290" y1="185" x2="410" y2="275" gradientUnits="userSpaceOnUse"><stop offset="0" stop-color="#a0a676"/><stop offset=".6" stop-color="#9ba171"/><stop offset="1" stop-color="#959b6c"/></linearGradient><linearGradient id="gse" x1="410" y1="270" x2="465" y2="215" gradientUnits="userSpaceOnUse"><stop offset="0" stop-color="#7a8056"/><stop offset=".6" stop-color="#858b5f"/><stop offset="1" stop-color="#8d9366"/></linearGradient></defs><path d="M353.3 106.6L348.2 138.4L311.7 177.8L296.2 166.8z" fill="#7d8358" stroke="#101008" stroke-width=".85"/><path d="M355.1 105.1L353.3 106.6L296.2 166.8L293.9 166.2z" fill="#a2a878" stroke="#101008" stroke-width=".75"/><path d="M353.3 106.6C393.7 132.5 432.6 161.9 465.6 197.4L449.4 217.8C417.8 189.1 385.2 160.5 348.2 138.4z" fill="url(#gne)" stroke="#101008" stroke-width=".85"/><path d="M355.1 105.1C396 130.1 432.1 162 466.4 194.8C467.8 196.4 468.4 198.4 467.6 199.8L465.6 197.4C432.6 161.9 393.7 132.5 353.3 106.6z" fill="#a8ae7e" stroke="#101008" stroke-width=".75"/><path d="M293.9 166.4C335.4 193 368.4 231.1 411.5 255.2L406 290.2C362.8 264.7 326.1 230.5 287.6 199z" fill="url(#gsw)" stroke="#101008" stroke-width=".85"/><path d="M293.9 166.4L296.2 166.8C337.6 193.2 370 229.4 413 253.4L411.5 255.2C368.4 231.1 335.4 193 293.9 166.4z" fill="#acb282" stroke="#101008" stroke-width=".7"/><path d="M411.5 255.2Q441.4 229 467.6 199.8L464.2 221L461 231.5C446.3 253.9 428.6 275.5 406 290.2z" fill="url(#gse)" stroke="#101008" stroke-width=".85"/><path d="M413 253.4Q440.6 227.4 465.6 197.4L467.6 199.8Q441.4 229 411.5 255.2z" fill="#a4aa7a" stroke="#101008" stroke-width=".7"/><path d="M401 173.2L424.6 151" stroke="#e82424" stroke-width=".9"/><path d="M432.6 143.4L423.6 148.2L427 151.6z" fill="#7a2444" stroke="#d82c3c" stroke-width=".8"/><path d="M400 174.2L422 153" stroke="#20ee20" stroke-width="1.1" stroke-dasharray="2.4 1.6"/><path d="M399.5 174.8L407 174" stroke="#e82424" stroke-width=".9"/><path d="M340 235.2L349 229.6M343.6 237.6L348.4 230" stroke="#28d828" stroke-width=".85"/><path d="M374.2 212L381.6 204.6M383 203.2L389.2 197.2" stroke="#ececf6" stroke-width=".85"/><path d="M374 213L373.4 223.6M371.8 220.6L373.3 224.6L375 220.8" stroke="#ececf6" stroke-width=".8" fill="none"/><path d="M379.2 208.2C377.4 210 377.4 213.4 380 215.8" stroke="#ececf6" stroke-width=".9" fill="none"/><path d="M386.1 211.1L392.2 206.1M388.3 213.3L392.8 216.7M380.5 219.4L388.3 223.3M379.4 223.3L386.1 225.5" stroke="#ececf6" stroke-width=".75" fill="none"/><circle cx="374.2" cy="212" r="1.6" fill="#ffffff"/><path d="M371.6 209.4L376.8 214.6M376.8 209.4L371.6 214.6" stroke="#fff" stroke-width=".7"/></svg>
<span class="t" style="left:384.00px;top:167.08px;font-size:6.8px;line-height:6.8px;color:#22e822;transform:scaleX(0.9638);">Distance</span>
<span class="t" style="left:408.40px;top:167.68px;font-size:6.8px;line-height:6.8px;color:#f43030;transform:scaleX(0.9217);">Surface</span>
<span class="t" style="left:344.40px;top:223.87px;font-size:6.4px;line-height:6.4px;color:#22e822;transform:scaleX(0.9666);">2.5</span>
<span class="t" style="left:389.00px;top:192.42px;font-size:6.5px;line-height:6.5px;color:#ececf6;transform:scaleX(0.9231);">z</span>
<span class="t" style="left:391.80px;top:220.42px;font-size:6.5px;line-height:6.5px;color:#ececf6;transform:scaleX(0.9846);">x</span>
<svg class="r" style="left:695.00px;top:62.00px;" width="70" height="66" viewBox="695 62 70 66" preserveAspectRatio="none"><path d="M705.4 91.2L702 103.2C704 110.6 711 117.4 719.4 121.8C724.6 124.4 730.6 124.4 730.9 120.4C731.2 116.4 729.6 111.6 727.4 108.2z" fill="#02023e" stroke="#d2bcf0" stroke-width="1"/><path d="M747.5 75C754.6 80 759.6 90 757.6 99.6C756.8 103.4 754.6 106.8 752 108.8L733.7 95.8z" fill="#02023e" stroke="#d2bcf0" stroke-width="1"/><path d="M747.5 75C746.4 84 742.4 93 735.8 99" fill="none" stroke="#d2bcf0" stroke-width=".9"/><path d="M729.8 93.6L734.9 97.4L728 103.8z" fill="#186a70" stroke="#d2bcf0" stroke-width=".8"/><path d="M751.6 70.4L716.4 106.6" stroke="#d2bcf0" stroke-width="1"/><circle cx="752.2" cy="69.6" r="1.5" fill="#ecdcfa"/><rect x="713.4" y="105.4" width="4" height="4" fill="#e80010"/></svg>
<span class="t" style="left:755.80px;top:71.47px;font-size:6.4px;line-height:6.4px;color:#d6c61e;font-weight:bold;transform:scaleX(1.0000);">z</span>
<span class="t" style="left:732.40px;top:109.07px;font-size:6.4px;line-height:6.4px;color:#d6c61e;font-weight:bold;transform:scaleX(0.8990);">y</span>
<span class="t" style="left:755.00px;top:111.27px;font-size:6.4px;line-height:6.4px;color:#d6c61e;font-weight:bold;transform:scaleX(0.8990);">x</span>
<div class="r" style="left:779.60px;top:42.00px;width:20.40px;height:355.00px;background:linear-gradient(to right,#8c8cb0 0%,#f4f4fc 6%,#e4e4f4 14%,#d0d0e6 26%,#d0d0e6 100%);"></div>
<div class="r" style="left:781.00px;top:36.50px;width:19.00px;height:6.00px;background:linear-gradient(to bottom,#d0d0e6 0%,#c6c6de 60%,#d0d0e6 100%);"></div>
<div class="r" style="left:779.80px;top:40.60px;width:2.40px;height:2.00px;background:linear-gradient(to right,#9090b0 0%,#f4f4fc 60%,#e0e0f0 100%);"></div>
<div class="r" style="left:783.20px;top:43.30px;width:7.60px;height:0.90px;background:#f8f8ff;box-shadow:0 0.7px 0 #9a9ab0;"></div>
<svg class="r" style="left:783.60px;top:48.40px;" width="14.4" height="14" viewBox="0 0 14.4 14" preserveAspectRatio="none"><path d="M1 13L2.6 6.4L6.6 10.6z" fill="#f09038"/><path d="M1 13L2 9L4.4 11.6z" fill="#e06818"/><path d="M10.4 3L13.8 1.2L13.4 7.4z" fill="#f0a860"/><path d="M2.4 4.6L6.4 1.6L12.4 4.4L13 8.8L8.8 11.8L3.6 9.4z" fill="#15151c"/><path d="M3.6 4.6L6.4 2.6L8.6 3.6L5.8 5.8z" fill="#e8e8ec"/><path d="M6.6 6.4L9.6 4.2L11.8 5.2L9 7.6z" fill="#f4f4f8"/><path d="M4 6.6L6 7.6L6.2 9.4L4.2 8.4z" fill="#b8b8c0"/><path d="M7.2 8.4L9 9.2L11.8 7L11.6 8.6L9 10.6L7.4 9.8z" fill="#c8c8d0"/></svg>
<div class="r" style="left:783.20px;top:67.60px;width:7.60px;height:0.90px;background:#f8f8ff;box-shadow:0 0.7px 0 #9a9ab0;"></div>
<svg class="r" style="left:784.40px;top:74.60px;" width="12" height="12.4" viewBox="0 0 12 12.4" preserveAspectRatio="none"><path d="M1.6 4.6L5 2.6L10.8 3.6V9L6.8 11.6L1.6 10z" fill="#d2d2e2" stroke="#a4a4bc" stroke-width=".7"/><path d="M1.6 4.6L6.8 6L10.8 3.6M6.8 6V11.6" stroke="#f4f4fc" stroke-width=".8" fill="none"/><path d="M3 6.6L5.4 7.4V9.6L3 8.8z" fill="#b4b4c8"/><path d="M8 7L9.8 5.8V8L8 9.2z" fill="#bcbcd0"/><path d="M2.4 1.4H5V3H2.4zM7 .8H9.4V2.6H7z" fill="#b8b8cc" stroke="#f0f0f8" stroke-width=".3"/></svg>
<svg class="r" style="left:784.40px;top:89.80px;" width="12" height="12.4" viewBox="0 0 12 12.4" preserveAspectRatio="none"><path d="M1.6 4.6L5 2.6L10.8 3.6V9L6.8 11.6L1.6 10z" fill="#d2d2e2" stroke="#a4a4bc" stroke-width=".7"/><path d="M1.6 4.6L6.8 6L10.8 3.6M6.8 6V11.6" stroke="#f4f4fc" stroke-width=".8" fill="none"/><path d="M3 6.6L5.4 7.4V9.6L3 8.8z" fill="#b4b4c8"/><path d="M8 7L9.8 5.8V8L8 9.2z" fill="#bcbcd0"/><path d="M2.4 1.4H5V3H2.4zM7 .8H9.4V2.6H7z" fill="#b8b8cc" stroke="#f0f0f8" stroke-width=".3"/></svg>
<svg class="r" style="left:784.40px;top:104.80px;" width="12" height="12.4" viewBox="0 0 12 12.4" preserveAspectRatio="none"><path d="M1.6 4.6L5 2.6L10.8 3.6V9L6.8 11.6L1.6 10z" fill="#d2d2e2" stroke="#a4a4bc" stroke-width=".7"/><path d="M1.6 4.6L6.8 6L10.8 3.6M6.8 6V11.6" stroke="#f4f4fc" stroke-width=".8" fill="none"/><path d="M3 6.6L5.4 7.4V9.6L3 8.8z" fill="#b4b4c8"/><path d="M8 7L9.8 5.8V8L8 9.2z" fill="#bcbcd0"/><path d="M2.4 1.4H5V3H2.4zM7 .8H9.4V2.6H7z" fill="#b8b8cc" stroke="#f0f0f8" stroke-width=".3"/></svg>
<svg class="r" style="left:784.40px;top:119.40px;" width="12" height="12.4" viewBox="0 0 12 12.4" preserveAspectRatio="none"><path d="M1.6 4.6L5 2.6L10.8 3.6V9L6.8 11.6L1.6 10z" fill="#d2d2e2" stroke="#a4a4bc" stroke-width=".7"/><path d="M1.6 4.6L6.8 6L10.8 3.6M6.8 6V11.6" stroke="#f4f4fc" stroke-width=".8" fill="none"/><path d="M3 6.6L5.4 7.4V9.6L3 8.8z" fill="#b4b4c8"/><path d="M8 7L9.8 5.8V8L8 9.2z" fill="#bcbcd0"/><path d="M2.4 1.4H5V3H2.4zM7 .8H9.4V2.6H7z" fill="#b8b8cc" stroke="#f0f0f8" stroke-width=".3"/></svg>
<div class="r" style="left:784.20px;top:135.20px;width:6.50px;height:0.90px;background:#f8f8ff;box-shadow:0 0.7px 0 #9a9ab0;"></div>
<svg class="r" style="left:785.60px;top:141.00px;" width="9" height="13" viewBox="0 0 9 13" preserveAspectRatio="none"><path d="M1.2 .8L7.6 7.8L4.8 8L6.4 11.6L5 12.2L3.4 8.6L1.2 10.4z" fill="#f4ec58" stroke="#6870a8" stroke-width=".6"/></svg>
<svg class="r" style="left:795.40px;top:152.60px;" width="3.4" height="2" viewBox="0 0 3.4 2" preserveAspectRatio="none"><path d="M0 0H3.4L1.7 1.9z" fill="#000"/></svg>
<svg class="r" style="left:784.60px;top:157.00px;" width="12" height="13.4" viewBox="0 0 12 13.4" preserveAspectRatio="none"><path d="M1.6 1.6L10.4 11.4M10.4 1.6L1.6 11.4" stroke="#181820" stroke-width="1.1" stroke-dasharray="2 1"/><path d="M5 4.6L9.6 9.6L7.4 9.8L8.4 12L7.4 12.4L6.4 10.2L5 11.2z" fill="#f0e040" stroke="#3060b0" stroke-width=".5"/><circle cx="6.6" cy="7.4" r="1.6" fill="#30a0e0"/></svg>
<svg class="r" style="left:795.40px;top:168.60px;" width="3.4" height="2" viewBox="0 0 3.4 2" preserveAspectRatio="none"><path d="M0 0H3.4L1.7 1.9z" fill="#000"/></svg>
<div class="r" style="left:784.20px;top:175.20px;width:6.50px;height:0.90px;background:#f8f8ff;box-shadow:0 0.7px 0 #9a9ab0;"></div>
<svg class="r" style="left:784.40px;top:181.00px;" width="12.6" height="13.4" viewBox="0 0 12.6 13.4" preserveAspectRatio="none"><path d="M1.4 4.6H8.6V11.6H1.4z" fill="#f4f4f4" stroke="#303038" stroke-width=".8"/><path d="M8.6 11.6L11.4 3.6L12.2 11.6z" fill="#f4f4f4" stroke="#303038" stroke-width=".6"/><path d="M3 9.6V7.2H6.4V9.6M4.6 7.2V11" stroke="#303038" stroke-width=".8" fill="none"/><path d="M7.4 6.6L10.6 1.4" stroke="#e8c030" stroke-width="1.3"/></svg>
<svg class="r" style="left:795.40px;top:192.60px;" width="3.4" height="2" viewBox="0 0 3.4 2" preserveAspectRatio="none"><path d="M0 0H3.4L1.7 1.9z" fill="#000"/></svg>
<div class="r" style="left:784.20px;top:199.80px;width:6.50px;height:0.90px;background:#f8f8ff;box-shadow:0 0.7px 0 #9a9ab0;"></div>
<svg class="r" style="left:788.00px;top:209.00px;" width="5" height="5" viewBox="0 0 5 5" preserveAspectRatio="none"><circle cx="2.5" cy="2.5" r="1.3" fill="#1040c0"/></svg>
<svg class="r" style="left:795.40px;top:216.80px;" width="3.4" height="2" viewBox="0 0 3.4 2" preserveAspectRatio="none"><path d="M0 0H3.4L1.7 1.9z" fill="#000"/></svg>
<svg class="r" style="left:784.60px;top:221.40px;" width="12" height="10.6" viewBox="0 0 12 10.6" preserveAspectRatio="none"><path d="M1 9.8L10.8 .8" stroke="#2858c0" stroke-width="1.1"/></svg>
<svg class="r" style="left:795.40px;top:233.00px;" width="3.4" height="2" viewBox="0 0 3.4 2" preserveAspectRatio="none"><path d="M0 0H3.4L1.7 1.9z" fill="#000"/></svg>
<svg class="r" style="left:784.60px;top:239.00px;" width="12.4" height="9" viewBox="0 0 12.4 9" preserveAspectRatio="none"><path d="M1 6.2L5.6 2.6L11.8 3.4L7.4 7z" fill="#f0ec78" stroke="#4868b0" stroke-width=".6"/><path d="M1 6.6L7.4 7.5L11.8 3.9" stroke="#202848" stroke-width=".8" fill="none"/></svg>
<svg class="r" style="left:795.40px;top:248.60px;" width="3.4" height="2" viewBox="0 0 3.4 2" preserveAspectRatio="none"><path d="M0 0H3.4L1.7 1.9z" fill="#000"/></svg>
<div class="r" style="left:781.60px;top:252.20px;width:18.40px;height:0.80px;background:#a8a8c2;box-shadow:0 .8px 0 #f4f4fc;"></div>
<svg class="r" style="left:784.60px;top:256.60px;" width="12.4" height="12" viewBox="0 0 12.4 12" preserveAspectRatio="none"><path d="M3.4 4.4C5.4 1.6 6.4 5 9.4 1" stroke="#2c9c9c" stroke-width=".9" fill="none"/><path d="M1 10.6C1.6 5 10.4 4.6 11.6 9.6L9.6 10.6C9 7.6 3.8 7.8 3.2 11.4z" fill="#2c6cf0"/><path d="M2.4 9.8C3.4 6 9.4 5.8 10.4 9.4" stroke="#38d8f0" stroke-width="1.3" fill="none"/><path d="M3.4 9C4.6 6.8 8.6 6.8 9.4 8.8" stroke="#d8f060" stroke-width=".9" fill="none"/></svg>
<svg class="r" style="left:795.40px;top:268.00px;" width="3.4" height="2" viewBox="0 0 3.4 2" preserveAspectRatio="none"><path d="M0 0H3.4L1.7 1.9z" fill="#000"/></svg>
<svg class="r" style="left:784.60px;top:272.60px;" width="12.4" height="11" viewBox="0 0 12.4 11" preserveAspectRatio="none"><path d="M2.6 1.6L7 1L11 4.6L10.6 8.6L7.6 7L5.4 10.4L3.4 7.6L1 8L3 5z" fill="#2848c8"/><path d="M4.4 4.4C6.4 3 9 4 9.8 6.4L8.4 7.6C7.4 6 6 5.6 4.6 6.4z" fill="#38d0e8"/><path d="M5 4.8C6.6 4.4 8.4 5.2 9 6.8" stroke="#d8f070" stroke-width="1" fill="none"/></svg>
<svg class="r" style="left:784.60px;top:286.60px;" width="12.4" height="12" viewBox="0 0 12.4 12" preserveAspectRatio="none"><path d="M1.2 9.4L5.6 2.6C7.6 1 10 1.6 11.6 4L7.2 10.8C5.6 8.6 3.2 8 1.2 9.4z" fill="#30b8f0"/><path d="M3.6 6.6C5.6 5 8 5.6 9.6 7.4M5 4.4C7 3 9.4 3.6 10.8 5.2" stroke="#d0f070" stroke-width=".9" fill="none"/><path d="M1.2 9.4L5.6 2.6" stroke="#2040c0" stroke-width="1.1"/><path d="M1.2 9.4C3.2 8 5.6 8.6 7.2 10.8" stroke="#1830a0" stroke-width=".8" fill="none"/></svg>
<svg class="r" style="left:795.40px;top:298.00px;" width="3.4" height="2" viewBox="0 0 3.4 2" preserveAspectRatio="none"><path d="M0 0H3.4L1.7 1.9z" fill="#000"/></svg>
<div class="r" style="left:781.60px;top:301.40px;width:18.40px;height:0.80px;background:#a8a8c2;box-shadow:0 .8px 0 #f4f4fc;"></div>
<svg class="r" style="left:785.00px;top:306.60px;" width="11.4" height="11.4" viewBox="0 0 11.4 11.4" preserveAspectRatio="none"><circle cx="5.7" cy="5.7" r="4.5" fill="none" stroke="#2868c8" stroke-width="1"/></svg>
<svg class="r" style="left:795.40px;top:318.40px;" width="3.4" height="2" viewBox="0 0 3.4 2" preserveAspectRatio="none"><path d="M0 0H3.4L1.7 1.9z" fill="#000"/></svg>
<svg class="r" style="left:785.00px;top:322.60px;" width="11" height="11" viewBox="0 0 11 11" preserveAspectRatio="none"><path d="M2 4C2.6 1 7.6 .6 8 4C8.4 6.4 4 6 4.4 8.6C4.8 10.6 8 10 9.4 8" stroke="#2858d0" stroke-width="1.1" fill="none"/></svg>
<svg class="r" style="left:795.40px;top:334.00px;" width="3.4" height="2" viewBox="0 0 3.4 2" preserveAspectRatio="none"><path d="M0 0H3.4L1.7 1.9z" fill="#000"/></svg>
<div class="r" style="left:784.20px;top:340.60px;width:6.50px;height:0.90px;background:#f8f8ff;box-shadow:0 0.7px 0 #9a9ab0;"></div>
<svg class="r" style="left:784.40px;top:346.00px;" width="12.6" height="12.4" viewBox="0 0 12.6 12.4" preserveAspectRatio="none"><path d="M2 2L10.6 10M10.6 2L2 10M6.2 .8V11.6M.8 6H11.8" stroke="#e8b8b0" stroke-width=".5"/><path d="M3 3.6L8.6 2.6L11 5.6L8 7.6L9.6 10L5 9.6z" fill="#3c2818"/><path d="M5 4.6L8.6 5.4L6.6 7.4z" fill="#e8d8b0"/><path d="M8.4 6.4L11.4 8.2" stroke="#f0a020" stroke-width="1.2"/></svg>
<div class="r" style="left:784.20px;top:364.00px;width:6.50px;height:0.90px;background:#f8f8ff;box-shadow:0 0.7px 0 #9a9ab0;"></div>
<svg class="r" style="left:784.60px;top:370.40px;" width="12.4" height="11.4" viewBox="0 0 12.4 11.4" preserveAspectRatio="none"><circle cx="6.2" cy="1.4" r=".8" fill="#181830"/><path d="M6.2 2V5" stroke="#181830" stroke-width=".6"/><path d="M1 7.6C2 4 10.4 4 11.4 7.6L10.4 10.6H2z" fill="#28b0d8" stroke="#1c4c90" stroke-width=".5"/><path d="M4.4 8.4L6.2 5.4L8 8.4z" fill="#f4ec40" stroke="#806010" stroke-width=".4"/></svg>
<svg class="r" style="left:792.60px;top:388.60px;" width="5" height="4.4" viewBox="0 0 5 4.4" preserveAspectRatio="none"><path d="M.6 .6L2.2 2.2L.6 3.8M2.6 .6L4.2 2.2L2.6 3.8" stroke="#b8b8cc" stroke-width=".6" fill="none"/></svg>
<div class="r" style="left:622.60px;top:222.00px;width:151.00px;height:168.00px;background:rgba(28,28,62,.55);border-radius:1px;"></div>
<div class="r" style="left:623.60px;top:222.80px;width:149.00px;height:166.00px;background:#1c1c44;"></div>
<div class="r" style="left:624.00px;top:223.20px;width:148.20px;height:165.20px;background:#fbe9c9;"></div>
<div class="r" style="left:624.00px;top:223.20px;width:148.20px;height:16.00px;background:#ffffff;"></div>
<span class="t" style="left:628.40px;top:227.78px;font-size:7.2px;line-height:7.2px;color:#2a2a2a;transform:scaleX(0.8677);">Offset Surface Definition</span>
<span class="t" style="left:734.20px;top:227.59px;font-size:7.4px;line-height:7.4px;color:#222;transform:scaleX(0.7775);">?</span>
<svg class="r" style="left:756.00px;top:228.00px;" width="7" height="7" viewBox="0 0 7 7" preserveAspectRatio="none"><path d="M1 1L6 6M6 1L1 6" stroke="#333" stroke-width=".7"/></svg>
<span class="t" style="left:629.00px;top:246.88px;font-size:7.2px;line-height:7.2px;color:#1e1e1e;transform:scaleX(0.8055);">Surface:</span>
<div class="r" style="left:652.00px;top:245.40px;width:103.40px;height:9.40px;background:#ffffff;border:0.6px solid #b4b0a8;border-radius:.8px;"></div>
<span class="t" style="left:654.20px;top:246.88px;font-size:7px;line-height:7px;color:#1e1e1e;transform:scaleX(0.8012);">Trim.14</span>
<span class="t" style="left:629.00px;top:260.48px;font-size:7.2px;line-height:7.2px;color:#1e1e1e;transform:scaleX(0.8541);">Offset:</span>
<div class="r" style="left:652.00px;top:258.60px;width:103.40px;height:10.20px;background:#ffffff;border:0.8px solid #8c8a88;border-bottom-color:#dcd8d0;border-right-color:#dcd8d0;"></div>
<div class="r" style="left:654.00px;top:260.00px;width:19.60px;height:7.40px;background:#0a6ad8;"></div>
<span class="t" style="left:654.40px;top:260.38px;font-size:7px;line-height:7px;color:#ffffff;transform:scaleX(0.8788);">2.5mm</span>
<div class="r" style="left:755.40px;top:258.60px;width:8.80px;height:10.20px;background:#e4e4e4;border:0.6px solid #8c8a88;"></div>
<svg class="r" style="left:755.40px;top:258.60px;" width="8.8" height="10.2" viewBox="0 0 8.8 10.2" preserveAspectRatio="none"><path d="M.6 5.1H8.2" stroke="#8c8a88" stroke-width=".6"/><path d="M2.6 3.8L4.4 1.6L6.2 3.8zM2.6 6.4L4.4 8.6L6.2 6.4z" fill="#111"/></svg>
<div class="r" style="left:629.00px;top:273.80px;width:43.60px;height:13.40px;background:#fbe9c9;border-top:0.7px solid #fff8e8;border-left:0.7px solid #fff8e8;border-right:1px solid #4c4638;border-radius:1.2px 1.2px 0 0;"></div>
<div class="r" style="left:673.40px;top:274.80px;width:77.60px;height:11.40px;background:#fbe9c9;border-top:0.7px solid #fff8e8;border-right:1px solid #5c5648;border-radius:1.2px 1.2px 0 0;"></div>
<span class="t" style="left:636.20px;top:276.68px;font-size:7.2px;line-height:7.2px;color:#1e1e1e;transform:scaleX(0.8061);">Parameters</span>
<span class="t" style="left:678.00px;top:276.68px;font-size:7.2px;line-height:7.2px;color:#1e1e1e;transform:scaleX(0.8506);">Sub-Elements to remove</span>
<div class="r" style="left:629.00px;top:286.40px;width:138.00px;height:80.40px;background:transparent;border-left:0.7px solid #fff8e8;border-right:1px solid #5c5648;border-bottom:1px solid #5c5648;"></div>
<div class="r" style="left:673.00px;top:286.20px;width:94.00px;height:0.80px;background:#fff8e8;"></div>
<span class="t" style="left:632.00px;top:289.38px;font-size:7.2px;line-height:7.2px;color:#1e1e1e;transform:scaleX(0.8895);text-shadow:0.12px 0 0 #2a2a2a;">Smoothing:</span>
<span class="t" style="left:632.00px;top:301.38px;font-size:7.2px;line-height:7.2px;color:#1e1e1e;transform:scaleX(0.8412);text-shadow:0.12px 0 0 #2a2a2a;">Regularization:</span>
<span class="t" style="left:632.00px;top:313.38px;font-size:7.2px;line-height:7.2px;color:#1e1e1e;transform:scaleX(0.8740);text-shadow:0.12px 0 0 #2a2a2a;">Maximum Deviation:</span>
<div class="r" style="left:690.20px;top:288.80px;width:67.40px;height:12.00px;background:#e1e1e1;border:0.6px solid #b4b4b4;"></div>
<span class="t" style="left:692.40px;top:291.28px;font-size:7.2px;line-height:7.2px;color:#1a1a1a;transform:scaleX(0.8482);">None</span>
<svg class="r" style="left:750.60px;top:293.00px;" width="5" height="4" viewBox="0 0 5 4" preserveAspectRatio="none"><path d="M.5 .8L2.5 2.9L4.5 .8" stroke="#444" stroke-width=".7" fill="none"/></svg>
<svg class="r" style="left:689.60px;top:302.60px;" width="7" height="7" viewBox="0 0 7 7" preserveAspectRatio="none"><circle cx="3.5" cy="3.5" r="2.9" fill="#6a8ed0"/><circle cx="2.9" cy="2.8" r="1.3" fill="#c4d8f4"/><circle cx="3.5" cy="3.5" r="2.9" fill="none" stroke="#5070a8" stroke-width=".5"/></svg>
<span class="t" style="left:699.20px;top:302.88px;font-size:7.2px;line-height:7.2px;color:#c4c8dc;transform:scaleX(0.8133);letter-spacing:.3px;">Local</span>
<svg class="r" style="left:716.60px;top:302.80px;" width="7" height="7" viewBox="0 0 7 7" preserveAspectRatio="none"><circle cx="3.5" cy="3.5" r="2.7" fill="#fdf4dc" stroke="#56503c" stroke-width=".7"/></svg>
<span class="t" style="left:726.20px;top:302.88px;font-size:7.2px;line-height:7.2px;color:#c4c8dc;transform:scaleX(0.8168);letter-spacing:.3px;">Global</span>
<div class="r" style="left:691.00px;top:314.00px;width:49.40px;height:10.60px;background:#f0f0f0;border:0.8px solid #6c6a68;border-bottom-color:#e8e4dc;border-right-color:#e8e4dc;"></div>
<span class="t" style="left:693.40px;top:315.98px;font-size:7px;line-height:7px;color:#a8a8a8;transform:scaleX(0.8881);">0.1mm</span>
<div class="r" style="left:740.20px;top:314.00px;width:8.60px;height:10.60px;background:#f4f4f4;border:0.6px solid #8c8a88;"></div>
<svg class="r" style="left:740.20px;top:314.00px;" width="8.6" height="10.6" viewBox="0 0 8.6 10.6" preserveAspectRatio="none"><path d="M.6 5.3H8" stroke="#8c8a88" stroke-width=".6"/><path d="M2.8 3.8L4.3 2L5.8 3.8zM2.8 6.8L4.3 8.6L5.8 6.8z" fill="#b0b0b0"/></svg>
<svg class="r" style="left:749.60px;top:312.60px;" width="13" height="13" viewBox="0 0 13 13" preserveAspectRatio="none"><path d="M2 5L5 1.6H11.6L9.6 5z" fill="#8c7c50" stroke="#181810" stroke-width=".6"/><path d="M9.6 5L11.6 1.6V9L9.6 12.4z" fill="#a89860" stroke="#181810" stroke-width=".6"/><rect x="1" y="5" width="8.6" height="7.4" fill="#d8cc60" stroke="#282408" stroke-width=".8"/><rect x="3.4" y="6.4" width="3.4" height="4.6" fill="#ece8b0" stroke="#282408" stroke-width=".8"/><path d="M3.4 8.7H6.8" stroke="#282408" stroke-width=".7"/><circle cx="8.4" cy="4.6" r="1.8" fill="none" stroke="#e8e8e8" stroke-width=".8"/></svg>
<div class="r" style="left:631.00px;top:327.20px;width:133.00px;height:0.70px;background:#e4d4b4;box-shadow:0 .7px 0 #fff8ec;"></div>
<div class="r" style="left:631.80px;top:329.60px;width:55.40px;height:9.40px;background:#d6d6ee;border-top:0.7px solid #f6f6ff;border-left:0.7px solid #f6f6ff;border-right:1px solid #44446c;border-bottom:1px solid #44446c;"></div>
<span class="t" style="left:636.00px;top:330.88px;font-size:7.2px;line-height:7.2px;color:#1e1e1e;transform:scaleX(0.8214);">Reverse Direction</span>
<div class="r" style="left:632.00px;top:343.00px;width:6.60px;height:6.60px;background:#fdf8de;border:0.7px solid #8c8468;border-right-color:#c8c0a4;border-bottom-color:#c8c0a4;"></div>
<span class="t" style="left:640.60px;top:342.98px;font-size:7.2px;line-height:7.2px;color:#1e1e1e;transform:scaleX(0.8209);">Both sides</span>
<div class="r" style="left:632.00px;top:354.60px;width:6.60px;height:6.60px;background:#fdf8de;border:0.7px solid #8c8468;border-right-color:#c8c0a4;border-bottom-color:#c8c0a4;"></div>
<span class="t" style="left:640.60px;top:354.58px;font-size:7.2px;line-height:7.2px;color:#1e1e1e;transform:scaleX(0.8383);">Repeat object after OK</span>
<div class="r" style="left:649.00px;top:373.80px;width:37.80px;height:10.60px;background:#d6d6ee;border-top:0.7px solid #f6f6ff;border-left:0.7px solid #f6f6ff;border-right:1px solid #44446c;border-bottom:1px solid #44446c;"></div>
<span class="t" style="left:667.40px;top:375.68px;font-size:7.2px;line-height:7.2px;color:#1e1e1e;transform:scaleX(0.8459);">OK</span>
<svg class="r" style="left:652.60px;top:376.00px;" width="6.4" height="6.4" viewBox="0 0 6.4 6.4" preserveAspectRatio="none"><circle cx="3.2" cy="3.2" r="2.7" fill="#18a018"/><circle cx="2.5" cy="2.4" r="1" fill="#90f090"/></svg>
<div class="r" style="left:690.40px;top:373.80px;width:36.40px;height:10.60px;background:#d6d6ee;border-top:0.7px solid #f6f6ff;border-left:0.7px solid #f6f6ff;border-right:1px solid #44446c;border-bottom:1px solid #44446c;"></div>
<span class="t" style="left:703.20px;top:375.68px;font-size:7.2px;line-height:7.2px;color:#1e1e1e;transform:scaleX(0.8120);">Cancel</span>
<svg class="r" style="left:694.00px;top:376.00px;" width="6.4" height="6.4" viewBox="0 0 6.4 6.4" preserveAspectRatio="none"><circle cx="3.2" cy="3.2" r="2.7" fill="#d01818"/><circle cx="2.5" cy="2.4" r="1" fill="#ffa0a0"/></svg>
<div class="r" style="left:730.80px;top:373.80px;width:36.80px;height:10.60px;background:#d6d6ee;border-top:0.7px solid #f6f6ff;border-left:0.7px solid #f6f6ff;border-right:1px solid #44446c;border-bottom:1px solid #44446c;"></div>
<span class="t" style="left:738.20px;top:375.68px;font-size:7.2px;line-height:7.2px;color:#1e1e1e;transform:scaleX(0.8200);">Preview</span>
<svg class="r" style="left:624.00px;top:366.00px;" width="32" height="22.4" viewBox="0 0 32 22.4" preserveAspectRatio="none"><defs><radialGradient id="dg1" gradientUnits="userSpaceOnUse" cx="4" cy="32" r="21" gradientTransform="translate(4 32) scale(1.06 1) translate(-4 -32)"><stop offset="0" stop-color="#1c1c24"/><stop offset=".55" stop-color="#3c3c44"/><stop offset=".68" stop-color="#5a86b4"/><stop offset=".82" stop-color="#98d0f2"/><stop offset=".92" stop-color="#d4ecf4"/><stop offset="1" stop-color="#f4e8d0" stop-opacity="0"/></radialGradient><radialGradient id="dg2" gradientUnits="userSpaceOnUse" cx="16.5" cy="13.6" r="5.5"><stop offset="0" stop-color="#f8a030" stop-opacity=".95"/><stop offset=".5" stop-color="#f8b458" stop-opacity=".6"/><stop offset="1" stop-color="#fbd898" stop-opacity="0"/></radialGradient><radialGradient id="dg3" gradientUnits="userSpaceOnUse" cx="9" cy="16" r="16"><stop offset="0" stop-color="#fbd080" stop-opacity=".75"/><stop offset=".6" stop-color="#fbdc9c" stop-opacity=".4"/><stop offset="1" stop-color="#fbe9c9" stop-opacity="0"/></radialGradient></defs><rect width="32" height="22.4" fill="url(#dg3)"/><rect width="32" height="22.4" fill="url(#dg2)"/><rect width="32" height="22.4" fill="url(#dg1)"/></svg>
<div class="r" style="left:0.00px;top:396.50px;width:800.00px;height:20.60px;background:linear-gradient(to bottom,#9c9cb8 0%,#ffffff 5%,#ffffff 11%,#e6e6f4 20%,#d2d2e8 30%,#d0d0e6 74%,#b0b0c6 86%,#8e8e9e 96%,#a0a0b4 100%);"></div>
<div class="r" style="left:2.40px;top:399.50px;width:1.70px;height:8.50px;background:#f6f6fd;box-shadow:0.6px 0 0 #b4b4cc;border-radius:.6px;"></div>
<div class="r" style="left:781.60px;top:396.50px;width:18.40px;height:16.20px;background:#d0d0e6;"></div>
<div class="r" style="left:780.20px;top:396.50px;width:2.20px;height:3.00px;background:linear-gradient(to right,#a8a8c4 0%,#f8f8ff 40%,#e4e4f2 100%);"></div>
<svg class="r" style="left:10.60px;top:402.00px;" width="12" height="12" viewBox="0 0 12 12" preserveAspectRatio="none"><path d="M1 1.4H6.6L9.6 4.4V11H1z" fill="#fcfcd0" stroke="#a8a8a0" stroke-width=".6"/><path d="M6.6 1.4V4.4H9.6" fill="#fff" stroke="#8c8c88" stroke-width=".6"/></svg>
<svg class="r" style="left:24.00px;top:402.00px;" width="12" height="12" viewBox="0 0 12 12" preserveAspectRatio="none"><path d="M1 3.6H5L6 4.6H10V10.4H1z" fill="#c89c18" stroke="#5c4808" stroke-width=".5"/><path d="M1 10.4L3 6H11.6L10 10.4z" fill="#f0c430" stroke="#6c5008" stroke-width=".6"/><path d="M7.6 2.6C8.6 1.4 10 1.6 10.6 3" stroke="#303030" stroke-width=".6" fill="none"/></svg>
<svg class="r" style="left:39.40px;top:402.00px;" width="12" height="12" viewBox="0 0 12 12" preserveAspectRatio="none"><rect x="1" y="1.4" width="9.4" height="9.6" fill="#8c8418" stroke="#38340c" stroke-width=".7"/><rect x="2.8" y="1.8" width="5.8" height="4" fill="#d0e4f8"/><path d="M2.8 3.2H8.6M2.8 4.6H8.6" stroke="#a8c8e8" stroke-width=".4"/><rect x="3.4" y="7.4" width="4.6" height="3.4" fill="#181818"/><rect x="6.4" y="8" width="1.1" height="2.2" fill="#e0e0d0"/></svg>
<svg class="r" style="left:53.00px;top:402.00px;" width="12" height="12" viewBox="0 0 12 12" preserveAspectRatio="none"><path d="M3 4.6L5 1.6H10L8.6 4.6z" fill="#48b8e8" stroke="#485060" stroke-width=".4"/><path d="M1 6L3 4.4H11L9.6 6z" fill="#c8c8a8"/><path d="M1 6H9.6V10H1z" fill="#a8a878" stroke="#484830" stroke-width=".5"/><path d="M9.6 6L11 4.4V8.4L9.6 10z" fill="#787850"/><path d="M2 8.4H8.6" stroke="#30a040" stroke-width=".8"/></svg>
<svg class="r" style="left:68.60px;top:402.00px;" width="10" height="12" viewBox="0 0 10 12" preserveAspectRatio="none"><path d="M2.2 .8L6.8 8M7.8 .8L3.2 8" stroke="#b4b4c6" stroke-width="1.2"/><circle cx="2.8" cy="9.4" r="1.6" fill="none" stroke="#b4b4c6" stroke-width="1"/><circle cx="7.2" cy="9.4" r="1.6" fill="none" stroke="#b4b4c6" stroke-width="1"/></svg>
<svg class="r" style="left:82.00px;top:402.00px;" width="12" height="12" viewBox="0 0 12 12" preserveAspectRatio="none"><path d="M1 1.4H5L6.6 3V8.4H1z" fill="#d8d8e6" stroke="#b0b0c4" stroke-width=".8"/><path d="M4.6 4H8.6L10.4 5.8V11.2H4.6z" fill="#d8d8e6" stroke="#b0b0c4" stroke-width=".8"/></svg>
<svg class="r" style="left:96.60px;top:402.00px;" width="12" height="12" viewBox="0 0 12 12" preserveAspectRatio="none"><path d="M1 2.4H8.6V9.6H1z" fill="#a89830" stroke="#484010" stroke-width=".6"/><path d="M3 1.4H6.6V3.4H3z" fill="#d8d060" stroke="#484010" stroke-width=".4"/><path d="M5.6 6.4H10.6V11H5.6z" fill="#e8e8f4" stroke="#5060a0" stroke-width=".5"/><path d="M6.6 10L8 8.6L9.6 10" stroke="#2848c0" stroke-width=".8" fill="none"/></svg>
<svg class="r" style="left:111.60px;top:402.00px;" width="12" height="12" viewBox="0 0 12 12" preserveAspectRatio="none"><path d="M2.4 5.2C4.4 2 8.8 2.2 9.6 5.6C10 8 8.8 9.6 7.2 10" stroke="#168838" stroke-width="2.1" fill="none"/><path d="M2.4 5.2C4.4 2 8.8 2.2 9.6 5.6C10 8 8.8 9.6 7.2 10" stroke="#30d468" stroke-width="1.3" fill="none"/><path d="M.6 3L1.2 7.6L5.4 5.6z" fill="#28c458" stroke="#168838" stroke-width=".4"/></svg>
<svg class="r" style="left:122.00px;top:412.80px;" width="3.4" height="2" viewBox="0 0 3.4 2" preserveAspectRatio="none"><path d="M0 0H3.4L1.7 1.9z" fill="#000"/></svg>
<svg class="r" style="left:127.40px;top:402.00px;" width="12" height="12" viewBox="0 0 12 12" preserveAspectRatio="none"><path d="M9.4 5.6C7.4 2 2.8 2 1.8 5.6C1.4 8 2.8 9.6 4.4 10" stroke="#c2c2d2" stroke-width="2" fill="none"/><path d="M11 2.4L10.2 7.8L5.6 5.4z" fill="#c2c2d2"/></svg>
<svg class="r" style="left:137.60px;top:412.80px;" width="3.4" height="2" viewBox="0 0 3.4 2" preserveAspectRatio="none"><path d="M0 0H3.4L1.7 1.9z" fill="#000"/></svg>
<svg class="r" style="left:142.60px;top:402.00px;" width="12" height="12" viewBox="0 0 12 12" preserveAspectRatio="none"><path d="M1 1L6 6.4L3.8 6.6L5 9.4L3.8 10L2.6 7.2L1 8.6z" fill="#f0e050" stroke="#4858a0" stroke-width=".5"/><path d="M6.2 3.8C6.2 .8 11 .8 11 3.8C11 5.6 8.7 5.4 8.7 7.6" stroke="#38a0b0" stroke-width="2.3" fill="none"/><path d="M6.2 3.8C6.2 .8 11 .8 11 3.8C11 5.6 8.7 5.4 8.7 7.6" stroke="#181878" stroke-width="1.7" fill="none"/><circle cx="8.7" cy="9.9" r="1.15" fill="#181878"/></svg>
<div class="r" style="left:161.00px;top:399.60px;width:1.70px;height:8.40px;background:#f6f6fd;box-shadow:0.6px 0 0 #b4b4cc;border-radius:.6px;"></div>
<span class="t" style="left:167.60px;top:401.98px;font-size:11.5px;line-height:11.5px;color:#111;font-style:italic;transform:scaleX(1.3772);">f</span>
<span class="t" style="left:172.20px;top:407.26px;font-size:5.2px;line-height:5.2px;color:#111;font-weight:bold;transform:scaleX(0.9755);">(x)</span>
<svg class="r" style="left:181.40px;top:402.00px;" width="12" height="12" viewBox="0 0 12 12" preserveAspectRatio="none"><path d="M.8 4.8C.8 .6 11.6 .6 11.6 4.8C11.6 8 7.4 8.6 5.8 8.4L2.4 11.2L3.4 8C1.6 7.4 .8 6.2 .8 4.8z" fill="#e8e8ec" stroke="#101010" stroke-width="1.2"/><circle cx="6" cy="4.8" r="1.8" fill="none" stroke="#505058" stroke-width=".7"/><path d="M6 3.6V6M4.8 4.8H7.2" stroke="#606068" stroke-width=".4"/></svg>
<svg class="r" style="left:197.60px;top:402.00px;" width="5" height="12" viewBox="0 0 5 12" preserveAspectRatio="none"><path d="M2.4 1.2L4 3.6H.8zM2.4 10.8L4 8.4H.8z" fill="#c4c4d4"/><path d="M2.4 3.4V8.6" stroke="#c4c4d4" stroke-width="1.2"/></svg>
<svg class="r" style="left:207.80px;top:402.00px;" width="12" height="12" viewBox="0 0 12 12" preserveAspectRatio="none"><rect x=".8" y="1" width="9.8" height="9" fill="#70708c" stroke="#383850" stroke-width=".5"/><rect x=".8" y="1" width="9.8" height="2.2" fill="#1828c8"/><path d="M.8 5.4H10.6M.8 7.6H10.6M4 3.2V10M7.4 3.2V10" stroke="#b0b0c8" stroke-width=".4"/></svg>
<svg class="r" style="left:218.40px;top:412.80px;" width="3.4" height="2" viewBox="0 0 3.4 2" preserveAspectRatio="none"><path d="M0 0H3.4L1.7 1.9z" fill="#000"/></svg>
<svg class="r" style="left:222.60px;top:402.00px;" width="12" height="12" viewBox="0 0 12 12" preserveAspectRatio="none"><path d="M3 6L8 2.4M3 6H8M3 6L8 9.6" stroke="#303038" stroke-width=".5"/><circle cx="2.6" cy="6" r="1.7" fill="#f0c828" stroke="#2868d8" stroke-width=".5"/><circle cx="9.4" cy="2.2" r="1.6" fill="#88a8f8" stroke="#2848d8" stroke-width=".5"/><circle cx="9.4" cy="6" r="1.6" fill="#88a8f8" stroke="#2848d8" stroke-width=".5"/><circle cx="9.4" cy="9.8" r="1.6" fill="#88a8f8" stroke="#2848d8" stroke-width=".5"/></svg>
<svg class="r" style="left:239.00px;top:402.00px;" width="12" height="12" viewBox="0 0 12 12" preserveAspectRatio="none"><path d="M3 5V3.6C3 .6 8 .6 8 3.6V5" stroke="#484850" stroke-width="1.1" fill="none"/><rect x="1.4" y="4.8" width="8.2" height="6" rx=".8" fill="#8c8c94" stroke="#383840" stroke-width=".6"/><path d="M5.5 6.4V9" stroke="#d8d8e0" stroke-width=".9"/><path d="M6.6 4.8V10.8" stroke="#505058" stroke-width=".5"/></svg>
<svg class="r" style="left:248.60px;top:412.80px;" width="3.4" height="2" viewBox="0 0 3.4 2" preserveAspectRatio="none"><path d="M0 0H3.4L1.7 1.9z" fill="#000"/></svg>
<svg class="r" style="left:253.00px;top:402.00px;" width="12" height="12" viewBox="0 0 12 12" preserveAspectRatio="none"><rect x="1" y="1" width="4" height="2.6" fill="#e8d040" stroke="#206868" stroke-width=".4"/><rect x="1" y="4.6" width="4" height="2.6" fill="#28a8a0" stroke="#206868" stroke-width=".4"/><rect x="1" y="8.2" width="4" height="2.6" fill="#28a8a0" stroke="#206868" stroke-width=".4"/><path d="M6 1C7.6 1 6.6 5.6 8 5.9C6.6 6.2 7.6 10.8 6 10.8" stroke="#383840" stroke-width=".7" fill="none"/><path d="M9.4 4.6V7.4M10.6 5.4V6.6" stroke="#8888a0" stroke-width=".6"/></svg>
<div class="r" style="left:271.40px;top:399.60px;width:1.70px;height:8.40px;background:#f6f6fd;box-shadow:0.6px 0 0 #b4b4cc;border-radius:.6px;"></div>
<svg class="r" style="left:277.60px;top:402.00px;" width="12" height="12" viewBox="0 0 12 12" preserveAspectRatio="none"><path d="M1.4 2.2L3 1.4L10.8 8.4L10.6 9.8L8.8 9.2z" fill="#3cd0f0" stroke="#1c60a8" stroke-width=".5"/><path d="M2 9L3.6 10L9.2 2.4L8 1.4L5.4 5z" fill="#3cd0f0" stroke="#1c60a8" stroke-width=".5"/><path d="M1 4.2L3.6 3" stroke="#1c60a8" stroke-width=".8"/></svg>
<svg class="r" style="left:292.60px;top:402.00px;" width="12" height="12" viewBox="0 0 12 12" preserveAspectRatio="none"><rect x=".8" y="1.2" width="10.2" height="9.4" fill="#f0f080" stroke="#30b8c0" stroke-width=".8"/><path d="M2 2.4L4.6 3.4L3 5zM9.8 2.4L7.2 3.4L8.8 5zM2 9.4L4.6 8.4L3 6.8zM9.8 9.4L7.2 8.4L8.8 6.8z" fill="#101010"/><path d="M2.6 3L9.2 8.8M9.2 3L2.6 8.8" stroke="#101010" stroke-width=".7"/><circle cx="5.9" cy="5.9" r="1.1" fill="#101010"/></svg>
<svg class="r" style="left:307.40px;top:402.00px;" width="12" height="12" viewBox="0 0 12 12" preserveAspectRatio="none"><path d="M6 .4L8 3.2H4zM6 11.6L8 8.8H4zM.4 6L3.2 4V8zM11.6 6L8.8 4V8z" fill="#141c80"/><path d="M6 3V9M3 6H9" stroke="#141c80" stroke-width="1.2" stroke-dasharray="1.2 .6"/><circle cx="6" cy="6" r="1" fill="#141c80"/></svg>
<svg class="r" style="left:321.60px;top:402.00px;" width="12" height="12" viewBox="0 0 12 12" preserveAspectRatio="none"><circle cx="7.6" cy="8" r="3" fill="#3090e8" stroke="#102860" stroke-width=".6"/><path d="M5.4 8.4C6.4 7.2 9 7.2 10.2 8.4" stroke="#a0d8ff" stroke-width=".7" fill="none"/><path d="M1 3.4L3 2.6C5 1.6 8.6 1.6 10.6 3.4C11 4.4 10.4 5.4 9.4 5.4L5.6 5.6C4.6 6.2 3.4 6 3 5.2L1 5z" fill="#f4c4ac" stroke="#201820" stroke-width=".6"/><path d="M5.6 4.2H9" stroke="#805848" stroke-width=".5"/><path d="M1 3.2V5.2" stroke="#2050a0" stroke-width="1"/></svg>
<svg class="r" style="left:336.60px;top:402.00px;" width="12" height="12" viewBox="0 0 12 12" preserveAspectRatio="none"><circle cx="4.2" cy="4.4" r="3" fill="#f0f8ff" stroke="#2050a0" stroke-width=".9"/><path d="M6.4 6.8L10.6 11" stroke="#2050a0" stroke-width="1.5"/><path d="M2.6 4.4H5.8M4.2 2.8V6" stroke="#101010" stroke-width=".9"/></svg>
<svg class="r" style="left:351.00px;top:402.00px;" width="12" height="12" viewBox="0 0 12 12" preserveAspectRatio="none"><circle cx="4.2" cy="4.4" r="3" fill="#f0f8ff" stroke="#2050a0" stroke-width=".9"/><path d="M6.4 6.8L10.6 11" stroke="#2050a0" stroke-width="1.5"/><path d="M2.6 4.4H5.8" stroke="#101010" stroke-width=".9"/></svg>
<svg class="r" style="left:365.60px;top:402.00px;" width="12" height="12" viewBox="0 0 12 12" preserveAspectRatio="none"><path d="M1 9.4L4.6 6.4H11.4L8 9.4z" fill="#38b8d8" stroke="#1c6080" stroke-width=".5"/><path d="M6 8V1.6" stroke="#e8a038" stroke-width=".9"/><path d="M4.8 2.8L6 .8L7.2 2.8z" fill="#7050c0"/></svg>
<svg class="r" style="left:380.60px;top:402.00px;" width="12" height="12" viewBox="0 0 12 12" preserveAspectRatio="none"><rect x=".6" y="1" width="9.6" height="8.8" rx=".6" fill="#2850d0"/><rect x="1.2" y="1.6" width="3.9" height="3.5" fill="#20d4f8"/><rect x="5.7" y="1.6" width="3.9" height="3.5" fill="#8868e0"/><rect x="1.2" y="5.7" width="3.9" height="3.5" fill="#20d4f8"/><rect x="5.7" y="5.7" width="3.9" height="3.5" fill="#20d4f8"/><path d="M.6 10.2H10.6" stroke="#a09868" stroke-width=".6"/></svg>
<svg class="r" style="left:394.60px;top:402.00px;" width="12" height="12" viewBox="0 0 12 12" preserveAspectRatio="none"><path d="M1 4L4 1H11.4L8.4 4z" fill="#90f0ff" stroke="#2838e8" stroke-width=".8"/><path d="M8.4 4L11.4 1V8L8.4 11z" fill="#28a8f0" stroke="#2838e8" stroke-width=".8"/><rect x="1" y="4" width="7.4" height="7" fill="#38dcf8" stroke="#2838e8" stroke-width=".8"/></svg>
<svg class="r" style="left:405.40px;top:412.80px;" width="3.4" height="2" viewBox="0 0 3.4 2" preserveAspectRatio="none"><path d="M0 0H3.4L1.7 1.9z" fill="#000"/></svg>
<svg class="r" style="left:411.60px;top:402.00px;" width="10" height="12" viewBox="0 0 10 12" preserveAspectRatio="none"><rect x=".8" y=".8" width="8" height="9.8" rx="1.4" fill="#e8e8f4" stroke="#5858a0" stroke-width=".7"/></svg>
<span class="t" style="left:413.80px;top:404.09px;font-size:7.6px;line-height:7.6px;color:#08080c;font-weight:bold;transform:scaleX(0.9047);">?</span>
<svg class="r" style="left:420.60px;top:412.80px;" width="3.4" height="2" viewBox="0 0 3.4 2" preserveAspectRatio="none"><path d="M0 0H3.4L1.7 1.9z" fill="#000"/></svg>
<svg class="r" style="left:426.60px;top:402.00px;" width="12" height="12" viewBox="0 0 12 12" preserveAspectRatio="none"><rect x=".8" y="1" width="9.8" height="9.6" fill="#38c0e8" stroke="#5858a8" stroke-width=".8"/><path d="M2.4 6.4C4 4 6 5.4 8.6 3.4L9.4 5C7 7 5 6 3.4 8z" fill="#e8d868" stroke="#405080" stroke-width=".4"/><path d="M3 8.6L6 7.4" stroke="#f4f4f4" stroke-width=".7"/></svg>
<svg class="r" style="left:441.00px;top:402.00px;" width="12" height="12" viewBox="0 0 12 12" preserveAspectRatio="none"><rect x=".8" y="1" width="9.8" height="9.6" fill="#38c0e8" stroke="#5858a8" stroke-width=".8"/><path d="M2.4 6.4C4 4 6 5.4 8.6 3.4L9.4 5C7 7 5 6 3.4 8z" fill="#e8d868" stroke="#405080" stroke-width=".4"/><path d="M3 8.6L6 7.4" stroke="#f4f4f4" stroke-width=".7"/></svg>
<div class="r" style="left:458.40px;top:399.60px;width:1.70px;height:8.40px;background:#f6f6fd;box-shadow:0.6px 0 0 #b4b4cc;border-radius:.6px;"></div>
<svg class="r" style="left:464.60px;top:402.00px;" width="12" height="12" viewBox="0 0 12 12" preserveAspectRatio="none"><circle cx="2.6" cy="2.6" r="1.5" fill="#20a8c0"/><path d="M4.4 2C7 .8 9.4 2 9.6 4.6" stroke="#2838c8" stroke-width=".8" fill="none"/><path d="M8.6 4L9.7 5.6L10.6 3.8z" fill="#2838c8"/><path d="M1.6 7L3 5.6H10.4V9.2L9 10.6H1.6z" fill="#c0c0c8" stroke="#303038" stroke-width=".6"/><rect x="3" y="7.4" width="5" height="1.6" fill="#e8e8f0" stroke="#303038" stroke-width=".3"/></svg>
<div class="r" style="left:482.40px;top:399.60px;width:1.70px;height:8.40px;background:#f6f6fd;box-shadow:0.6px 0 0 #b4b4cc;border-radius:.6px;"></div>
<svg class="r" style="left:488.60px;top:402.00px;" width="12" height="12" viewBox="0 0 12 12" preserveAspectRatio="none"><path d="M2 3H10" stroke="#2038c0" stroke-width="1"/><path d="M.4 3L3.4 1V5zM11.6 3L8.6 1V5z" fill="#2038c0"/><rect x="1" y="6" width="10" height="3.4" fill="#f0a088" stroke="#3050a8" stroke-width=".6"/><path d="M3 7V9M5 7V9M7 7V9M9 7V9" stroke="#a04838" stroke-width=".4"/></svg>
<svg class="r" style="left:504.60px;top:402.00px;" width="12" height="12" viewBox="0 0 12 12" preserveAspectRatio="none"><path d="M1 4L4 2H10V9L7 10.6H4z" fill="#383840" stroke="#181820" stroke-width=".5"/><circle cx="3.6" cy="5.6" r="1.8" fill="#30c0d8"/><circle cx="3.4" cy="5.2" r=".8" fill="#c0f0a0"/><path d="M6 8.4L9.4 7.4" stroke="#9090a0" stroke-width=".8"/></svg>
<svg class="r" style="left:520.00px;top:402.00px;" width="10" height="12" viewBox="0 0 10 12" preserveAspectRatio="none"><path d="M3.6 3.4C3.6 1.2 6.2 1.2 6.2 3.4" stroke="#181810" stroke-width="1" fill="none"/><path d="M2 4.8C2 3.6 7.8 3.6 7.8 4.8V9.4C7.8 10.8 2 10.8 2 9.4z" fill="#d0b020" stroke="#584808" stroke-width=".5"/><path d="M3 4.6V9.6" stroke="#f8e880" stroke-width=".9"/></svg>
<div class="r" style="left:537.20px;top:399.60px;width:1.70px;height:8.40px;background:#f6f6fd;box-shadow:0.6px 0 0 #b4b4cc;border-radius:.6px;"></div>
<svg class="r" style="left:542.60px;top:402.00px;" width="12" height="12" viewBox="0 0 12 12" preserveAspectRatio="none"><path d="M1 2H6V10H1zM6 4H10.6V10H6zM1 5H10.6M3.4 2V10M8 4V10" stroke="#c4c4d2" stroke-width=".8" fill="#e2e2ee"/></svg>
<svg class="r" style="left:557.60px;top:402.00px;" width="12" height="12" viewBox="0 0 12 12" preserveAspectRatio="none"><rect x="1" y="2.6" width="8.4" height="8" fill="#48d0f0" stroke="#3878a0" stroke-width=".6"/><path d="M1 1.4H9.4M10.6 2.6V10.6" stroke="#c8b040" stroke-width=".8"/><path d="M1 .6V2.2M9.4 .6V2.2M9.8 2.6H11.4M9.8 10.6H11.4" stroke="#806810" stroke-width=".5"/></svg>
<div class="r" style="left:576.00px;top:399.60px;width:1.70px;height:8.40px;background:#f6f6fd;box-shadow:0.6px 0 0 #b4b4cc;border-radius:.6px;"></div>
<span class="t" style="left:587.20px;top:403.35px;font-size:4.6px;line-height:4.6px;color:#2838a8;font-weight:bold;transform:scaleX(0.7024);">ABC</span>
<svg class="r" style="left:582.60px;top:402.60px;" width="12" height="12" viewBox="0 0 12 12" preserveAspectRatio="none"><path d="M1.6 8.4L6.4 5.8" stroke="#2838a8" stroke-width=".7"/><path d="M.8 9.2L1.4 7.2L3 8.6z" fill="#181870"/><path d="M4.6 5.4H11.6" stroke="#2838a8" stroke-width=".4"/></svg>
<svg class="r" style="left:592.60px;top:412.80px;" width="3.4" height="2" viewBox="0 0 3.4 2" preserveAspectRatio="none"><path d="M0 0H3.4L1.7 1.9z" fill="#000"/></svg>
<div class="r" style="left:601.20px;top:399.60px;width:1.70px;height:8.40px;background:#f6f6fd;box-shadow:0.6px 0 0 #b4b4cc;border-radius:.6px;"></div>
<svg class="r" style="left:607.60px;top:402.00px;" width="12" height="12" viewBox="0 0 12 12" preserveAspectRatio="none"><path d="M1.6 3.6L5 1.6L10.6 2.6V8L6.6 10.6L1.6 9z" fill="#c0b8d0" stroke="#d05050" stroke-width=".5"/><path d="M1.6 3.6L6.6 5L10.6 2.6M6.6 5V10.6" stroke="#d05050" stroke-width=".4" fill="none"/><circle cx="3.4" cy="5.6" r="1.5" fill="#2878e8"/><circle cx="5.6" cy="8" r="1.5" fill="#2878e8"/><circle cx="3" cy="9.4" r="1.3" fill="#2878e8"/></svg>
<svg class="r" style="left:618.40px;top:412.80px;" width="3.4" height="2" viewBox="0 0 3.4 2" preserveAspectRatio="none"><path d="M0 0H3.4L1.7 1.9z" fill="#000"/></svg>
<div class="r" style="left:626.40px;top:399.60px;width:1.70px;height:8.40px;background:#f6f6fd;box-shadow:0.6px 0 0 #b4b4cc;border-radius:.6px;"></div>
<svg class="r" style="left:632.60px;top:402.00px;" width="12" height="12" viewBox="0 0 12 12" preserveAspectRatio="none"><path d="M1 7L6 4L11.4 6L6.6 10.6z" fill="#18a8c8" stroke="#102060" stroke-width=".5"/><path d="M1 7L6.6 10.6L11.4 6L11 7.6L6.6 11.6L1.4 8.4z" fill="#1828a0"/><path d="M5.6 6.6L9.6 7.6L7 9.6z" fill="#c82028"/><path d="M5.6 6.8V2" stroke="#f0e030" stroke-width=".8"/><circle cx="5.6" cy="1.4" r=".9" fill="#f0e030"/><path d="M2 3.4L5 6.4" stroke="#e82838" stroke-width=".6" stroke-dasharray="1 .8"/></svg>
<svg class="r" style="left:643.60px;top:412.80px;" width="3.4" height="2" viewBox="0 0 3.4 2" preserveAspectRatio="none"><path d="M0 0H3.4L1.7 1.9z" fill="#000"/></svg>
<div class="r" style="left:653.40px;top:399.60px;width:1.70px;height:8.40px;background:#f6f6fd;box-shadow:0.6px 0 0 #b4b4cc;border-radius:.6px;"></div>
<svg class="r" style="left:659.60px;top:402.00px;" width="12" height="12" viewBox="0 0 12 12" preserveAspectRatio="none"><path d="M1 5.4C1 2 6 1.4 7.6 3L10.8 1.4L11.4 5.6C11.4 9 8.6 10.8 6 10.8C3 10.8 1 8.6 1 5.4z" fill="#f09028"/><path d="M7.6 3L10.8 1.4L11.4 5.6L8.6 7z" fill="#b8b8c0"/><circle cx="5" cy="6.4" r="2.6" fill="#f8c868"/><circle cx="5" cy="6.4" r="1.2" fill="#e06818"/><path d="M6.6 4.6L9 1.8" stroke="#282020" stroke-width=".8"/></svg>
<span class="t" style="left:780.20px;top:397.27px;font-size:6.4px;line-height:6.4px;color:#e0282c;font-weight:bold;font-style:italic;transform:scaleX(1.0114);">3</span>
<span class="t" style="left:775.80px;top:402.11px;font-size:9.2px;line-height:9.2px;color:#5c34a8;font-weight:bold;font-style:italic;transform:scaleX(0.9633);">D</span>
<span class="t" style="left:781.80px;top:400.62px;font-size:10px;line-height:10px;color:#f0a018;font-weight:bold;font-style:italic;transform:scaleX(0.9895);">S</span>
<span class="t" style="left:778.80px;top:409.26px;font-size:5.4px;line-height:5.4px;color:#5830a8;font-weight:bold;font-style:italic;transform:scaleX(1.0933);">CATIA</span>
<div class="r" style="left:0.00px;top:417.00px;width:800.00px;height:12.20px;background:#d1d1e7;"></div>
<span class="t" style="left:2.20px;top:419.53px;font-size:6.9px;line-height:6.9px;color:#1a1a2c;transform:scaleX(0.8852);">Enter an offset value or reverse the offset direction</span>
<div class="r" style="left:608.50px;top:417.80px;width:156.00px;height:9.80px;background:#ffffff;border:0.6px solid #b8b8c8;border-top-color:#888898;border-left-color:#888898;"></div>
<div class="r" style="left:765.60px;top:417.40px;width:15.80px;height:10.40px;background:#d8d8ea;border:0.8px solid #fafaff;border-right-color:#6c6c84;border-bottom-color:#6c6c84;"></div>
<svg class="r" style="left:765.60px;top:417.40px;" width="16" height="10.4" viewBox="0 0 16 10.4" preserveAspectRatio="none"><path d="M4.6 3.2H9.4V7.2H4.6z" fill="#e8e8f0" stroke="#1c1c2c" stroke-width=".9"/><path d="M6.8 5.2H8.6M10.6 2.8V7.8M8.8 7.8H10.6" stroke="#1c1c2c" stroke-width=".8" fill="none"/></svg>
<div class="r" style="left:783.00px;top:417.40px;width:15.80px;height:10.40px;background:#d8d8ea;border:0.8px solid #fafaff;border-right-color:#6c6c84;border-bottom-color:#6c6c84;"></div>
<svg class="r" style="left:783.00px;top:417.40px;" width="16" height="10.4" viewBox="0 0 16 10.4" preserveAspectRatio="none"><path d="M4.8 3.2H10.4V7.4H4.8z" fill="#e0e0ec" stroke="#b0b0c0" stroke-width=".8"/><path d="M6.4 5.2a1.3 1.3 0 1 0 2.6 0" stroke="#b0b0c0" stroke-width=".7" fill="none"/></svg>
<div class="r" style="left:0.00px;top:429.00px;width:800.00px;height:21.00px;background:#101010;"></div>
<svg class="r" style="left:7.60px;top:435.40px;" width="10" height="9.4" viewBox="0 0 10 9.4" preserveAspectRatio="none"><path d="M.4 1.4L4 .9V4.3H.4zM4.7 .8L9.4 .1V4.3H4.7zM.4 5H4V8.4L.4 7.9zM4.7 5H9.4V9.2L4.7 8.5z" fill="#ffffff"/></svg>
<div class="r" style="left:25.40px;top:429.30px;width:178.60px;height:20.70px;background:#f3f3f3;"></div>
<svg class="r" style="left:31.00px;top:435.00px;" width="10" height="10" viewBox="0 0 10 10" preserveAspectRatio="none"><circle cx="6" cy="3.8" r="2.7" fill="none" stroke="#333" stroke-width=".8"/><path d="M4 5.8L.8 9" stroke="#333" stroke-width=".9"/></svg>
<span class="t" style="left:46.20px;top:436.09px;font-size:8px;line-height:8px;color:#4a4a4a;transform:scaleX(0.9447);">Type here to search</span>
<svg class="r" style="left:211.50px;top:434.50px;" width="10" height="10" viewBox="0 0 10 10" preserveAspectRatio="none"><circle cx="5" cy="5" r="3.4" fill="none" stroke="#f8f8f8" stroke-width="1.25"/></svg>
<svg class="r" style="left:236.00px;top:435.00px;" width="12" height="9" viewBox="0 0 12 9" preserveAspectRatio="none"><rect x="1.6" y="1.4" width="5.4" height="6" fill="none" stroke="#e8e8e8" stroke-width=".7"/><path d="M1.6 .4V1.4M7 .4V1.4M1.6 7.4V8.4M7 7.4V8.4" stroke="#e8e8e8" stroke-width=".7"/><path d="M9.4 3V8.2" stroke="#e8e8e8" stroke-width=".9"/><rect x="8.9" y="1" width="1" height="1" fill="#e8e8e8"/></svg>
<svg class="r" style="left:261.40px;top:433.60px;" width="14" height="13" viewBox="0 0 14 13" preserveAspectRatio="none"><defs><linearGradient id="eg" x1="0" y1="0" x2="1" y2="1"><stop offset="0" stop-color="#35c1f1"/><stop offset=".5" stop-color="#1b9de2"/><stop offset="1" stop-color="#0a60b0"/></linearGradient></defs><circle cx="7" cy="6.5" r="6" fill="url(#eg)"/><path d="M7 .5C10.6 .5 13 3.2 13 6C13 8 11.6 8.8 10.2 8.8C8.8 8.8 8.2 8 8.6 7C9 6 8.4 4.4 6.6 4.4C4.4 4.4 2.6 6 2.2 8.4C.4 4.6 3 .5 7 .5z" fill="#5fd06a"/><path d="M7 .5C10.6 .5 13 3.2 13 6C12 3.6 9.6 2.6 7.4 2.8C5 3 3 4.6 2.2 8.4C.4 4.6 3 .5 7 .5z" fill="#3cc8b4"/><path d="M4.4 8.6C4.4 6.8 5.6 5.6 6.8 5.6C7.8 5.6 8.2 6.4 8 7.2C7.6 8.6 8.6 10.2 10.8 10C9.8 11.8 7.4 12.4 5.8 11.4C4.8 10.8 4.4 9.8 4.4 8.6z" fill="#101010"/></svg>
<div class="r" style="left:258.00px;top:448.20px;width:21.40px;height:1.80px;background:#b8b8b8;"></div>
<svg class="r" style="left:288.60px;top:433.60px;" width="13" height="13" viewBox="0 0 13 13" preserveAspectRatio="none"><path d="M3.6 1.6H11.6V7.6H3.6z" fill="#38b0f0"/><path d="M1 10.6L3 8.2H9L8 10.6z" fill="#e8e8f0"/><path d="M1 10.6H8V11.6H1z" fill="#b8b8c8"/></svg>
<svg class="r" style="left:313.60px;top:433.60px;" width="13" height="12.4" viewBox="0 0 13 12.4" preserveAspectRatio="none"><path d="M1 1.4H5L6 2.4H11.6V4H1z" fill="#e8a818"/><path d="M1 3.4H11.6V11.4H1z" fill="#f8d040"/><path d="M3 6.6H9.6V11.4H3z" fill="#3890e0"/><path d="M4.4 9H8.2V11.4H4.4z" fill="#f8d040"/></svg>
<div class="r" style="left:309.40px;top:448.20px;width:21.40px;height:1.80px;background:#b8b8b8;"></div>
<svg class="r" style="left:339.60px;top:434.00px;" width="13.4" height="12" viewBox="0 0 13.4 12" preserveAspectRatio="none"><path d="M.8 4L6.7 .6L12.6 4V11H.8z" fill="#1888e0"/><path d="M.8 4.4L6.7 8.4L12.6 4.4" fill="#f4f4f8"/><path d="M.8 4.4L6.7 8.4L12.6 4.4V11H.8z" fill="#2098f0"/><path d="M.8 11L6.7 6.6L12.6 11z" fill="#1070c8"/></svg>
<svg class="r" style="left:365.60px;top:433.60px;" width="13" height="13" viewBox="0 0 13 13" preserveAspectRatio="none"><circle cx="6.5" cy="6.5" r="6" fill="#e84030"/><path d="M6.5 6.5L1.3 3.5A6 6 0 0 0 6.2 12.5L9 8z" fill="#30a850"/><path d="M6.5 6.5L9 8L6.2 12.5A6 6 0 0 0 11.7 3.5H6.5z" fill="#f8c020"/><circle cx="6.5" cy="6.5" r="2.8" fill="#f4f4f4"/><circle cx="6.5" cy="6.5" r="2.1" fill="#4080e8"/></svg>
<div class="r" style="left:361.00px;top:448.20px;width:21.60px;height:1.80px;background:#b8b8b8;"></div>
<svg class="r" style="left:392.40px;top:434.40px;" width="11" height="11" viewBox="0 0 11 11" preserveAspectRatio="none"><circle cx="5.5" cy="5.5" r="3" fill="none" stroke="#f0f0f0" stroke-width="1.5"/><path d="M5.5 .4V2M5.5 9V10.6M.4 5.5H2M9 5.5H10.6M1.9 1.9L3 3M8 8L9.1 9.1M9.1 1.9L8 3M3 8L1.9 9.1" stroke="#f0f0f0" stroke-width="1.3"/></svg>
<div class="r" style="left:386.60px;top:448.20px;width:21.60px;height:1.80px;background:#b8b8b8;"></div>
<svg class="r" style="left:415.60px;top:433.60px;" width="14" height="12.6" viewBox="0 0 14 12.6" preserveAspectRatio="none"><path d="M4 1H13V11.6H4z" fill="#2878d8"/><path d="M4 3.6H13M4 6.3H13M4 9H13" stroke="#1858b0" stroke-width=".5"/><path d="M4 1H13V3.6H4z" fill="#48a0f0"/><rect x=".6" y="3" width="6.8" height="6.6" fill="#1858b8"/></svg>
<span class="t" style="left:417.40px;top:437.36px;font-size:5.4px;line-height:5.4px;color:#fff;font-weight:bold;transform:scaleX(0.8633);">W</span>
<div class="r" style="left:412.60px;top:448.20px;width:21.60px;height:1.80px;background:#b8b8b8;"></div>
<div class="r" style="left:437.20px;top:429.20px;width:25.00px;height:20.80px;background:#343434;"></div>
<div class="r" style="left:437.20px;top:448.20px;width:25.00px;height:1.80px;background:#d0d0d0;"></div>
<svg class="r" style="left:442.60px;top:433.60px;" width="14" height="13" viewBox="0 0 14 13" preserveAspectRatio="none"><rect x=".4" y=".4" width="13.2" height="12.2" fill="#0c1030" stroke="#d8d8d8" stroke-width=".8"/><path d="M2 1C4.6 4.6 6.6 8.6 12.6 12L9 12.2C5.6 9.6 3.4 6 1.2 3z" fill="#2f7fe0"/><path d="M2.2 1.6C4.6 4.6 7 8 11.6 11" stroke="#8fd0ff" stroke-width=".7" fill="none"/><circle cx="9" cy="5.4" r="2.5" fill="#ff8a1c"/><circle cx="9.4" cy="5" r="1.3" fill="#ffe070"/></svg>
<svg class="r" style="left:642.00px;top:436.60px;" width="10" height="7" viewBox="0 0 10 7" preserveAspectRatio="none"><path d="M1.4 5.4L4.9 1.9L8.4 5.4" stroke="#e8e8e8" stroke-width=".8" fill="none"/></svg>
<svg class="r" style="left:655.40px;top:434.60px;" width="9" height="10.4" viewBox="0 0 9 10.4" preserveAspectRatio="none"><rect x="2" y="2.4" width="4.4" height="5.6" rx="1.4" fill="none" stroke="#d8d8d8" stroke-width=".7"/><path d="M3.4 .8V2.4M5 .8V2.4M4.2 8V9.8M6.4 4.4H7.8V6.4H6.4" stroke="#d8d8d8" stroke-width=".7" fill="none"/></svg>
<svg class="r" style="left:666.60px;top:435.00px;" width="11" height="10" viewBox="0 0 11 10" preserveAspectRatio="none"><path d="M2 7C.4 7 .4 4.4 2.4 4.4C2.8 2 6.6 2 7 4C9 4 9 7 7.4 7z" fill="#c8c8c8"/><circle cx="7.4" cy="7" r="2.3" fill="#e81828"/><path d="M6.4 6L8.4 8M8.4 6L6.4 8" stroke="#fff" stroke-width=".6"/></svg>
<svg class="r" style="left:679.60px;top:436.00px;" width="10" height="8" viewBox="0 0 10 8" preserveAspectRatio="none"><rect x=".8" y="1.6" width="7.4" height="4.4" fill="none" stroke="#e0e0e0" stroke-width=".7"/><rect x="1.6" y="2.4" width="4.4" height="2.8" fill="#f0f0f0"/><path d="M8.8 3V4.6" stroke="#e0e0e0" stroke-width=".8"/></svg>
<svg class="r" style="left:692.00px;top:435.40px;" width="10" height="9" viewBox="0 0 10 9" preserveAspectRatio="none"><path d="M1 8C1.4 4 4.6 1.2 8.6 1" stroke="#888" stroke-width=".7" fill="none"/><path d="M3.4 8C3.6 5.4 5.6 3.6 8.2 3.4" stroke="#bbb" stroke-width=".7" fill="none"/><path d="M5.6 8C5.8 6.8 6.8 5.8 8 5.6" stroke="#ddd" stroke-width=".7" fill="none"/><circle cx="7.8" cy="7.8" r=".8" fill="#eee"/></svg>
<svg class="r" style="left:703.40px;top:435.60px;" width="9" height="9" viewBox="0 0 9 9" preserveAspectRatio="none"><path d="M.8 3.2H2.4L4.4 1.4V7.4L2.4 5.6H.8z" fill="none" stroke="#e0e0e0" stroke-width=".6"/><path d="M5.6 3C6.2 3.8 6.2 5 5.6 5.8M6.8 2C8 3.4 8 5.4 6.8 6.8" stroke="#e0e0e0" stroke-width=".6" fill="none"/></svg>
<span class="t" style="left:719.00px;top:437.13px;font-size:6.9px;line-height:6.9px;color:#ffffff;transform:scaleX(0.8025);">ENG</span>
<span class="t" style="left:739.80px;top:432.33px;font-size:7.1px;line-height:7.1px;color:#ffffff;transform:scaleX(0.8800);">02:48 AM</span>
<span class="t" style="left:737.40px;top:442.03px;font-size:7.1px;line-height:7.1px;color:#ffffff;transform:scaleX(0.8949);">07/04/2021</span>
<svg class="r" style="left:777.40px;top:434.40px;" width="12" height="11" viewBox="0 0 12 11" preserveAspectRatio="none"><path d="M1.4 1.4H9.6V7.6H5L3.4 9.4V7.6H1.4z" fill="none" stroke="#e8e8e8" stroke-width=".7"/><circle cx="8.8" cy="8.2" r="1.3" fill="#101010" stroke="#e8e8e8" stroke-width=".5"/></svg>
</body></html>
